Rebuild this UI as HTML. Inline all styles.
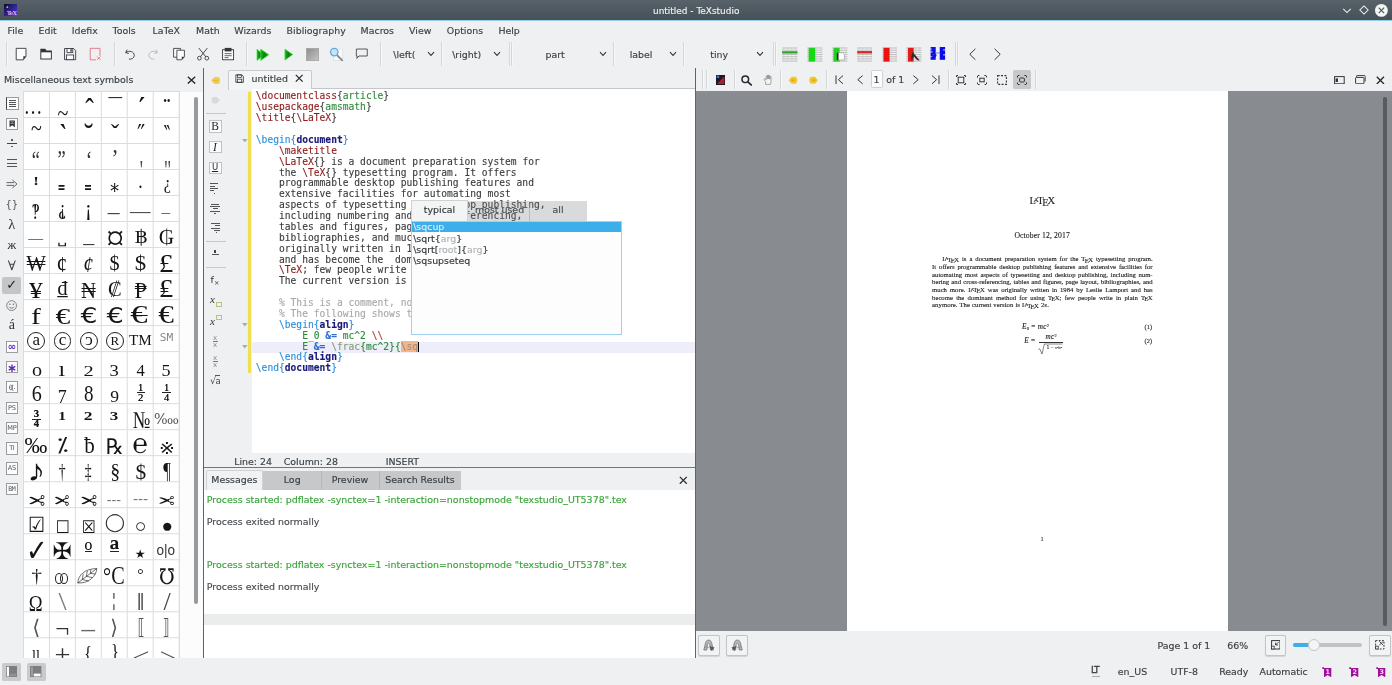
<!DOCTYPE html>
<html lang="en"><head><meta charset="utf-8"><title>untitled - TeXstudio</title>
<style>
html,body{margin:0;padding:0;}
body{width:1392px;height:685px;overflow:hidden;background:#eff0f1;}
#app{will-change:transform;position:relative;width:1392px;height:685px;overflow:hidden;background:#eff0f1;font-family:"DejaVu Sans","Liberation Sans",sans-serif;}
.r{position:absolute;display:block;}
.t{position:absolute;white-space:pre;line-height:12px;-webkit-text-stroke:0.15px currentColor;font-family:"DejaVu Sans","Liberation Sans",sans-serif;}
.m{position:absolute;white-space:pre;-webkit-text-stroke:0.12px currentColor;font-family:"DejaVu Sans Mono","Liberation Mono",monospace;font-size:9.634px;line-height:10.875px;color:#3c3c3c;}
.sy{position:absolute;white-space:pre;text-align:center;font-family:"DejaVu Serif","Liberation Serif",serif;color:#111;line-height:26px;width:26px;height:26px;}
.pd{position:absolute;white-space:pre;-webkit-text-stroke:0.12px currentColor;font-family:"Liberation Serif","DejaVu Serif",serif;color:#222;}
.g{position:absolute;white-space:pre;line-height:30px;height:30px;}

</style></head>
<body>
<div id="app">
<!-- s_chrome -->
<div class="r" style="left:0.00px;top:0.00px;width:1392.00px;height:19.90px;background:linear-gradient(#58626a,#465057);"></div>
<div class="r" style="left:0.00px;top:19.70px;width:1392.00px;height:1.20px;background:linear-gradient(#6db4dc,#bfe3f6);"></div>
<svg class="r" style="left:4.00px;top:4.00px;" width="13.20" height="12.20" viewBox="0 0 13.2 12.2"><defs><linearGradient id="ai" x1="0" y1="0" x2="1" y2="1"><stop offset="0" stop-color="#0a0a14"/><stop offset="0.3" stop-color="#241a6a"/><stop offset="0.7" stop-color="#3b2bb8"/><stop offset="1" stop-color="#5a4ad8"/></linearGradient></defs><rect width="13.2" height="12.2" fill="url(#ai)"/><path d="M2.2 3.6 L3.4 2 L4.4 3.8 Z" fill="#f0f0ff"/><text x="3.0" y="10.6" font-family="DejaVu Serif,serif" font-size="5.4" font-weight="bold" fill="#f0a8d8" letter-spacing="-0.5">TeX</text></svg>
<div class="t" style="left:653.00px;top:5.10px;font-size:8.95px;color:#eff0f1;">untitled - TeXstudio</div>
<svg class="r" style="left:1341.00px;top:4.00px;" width="12.00" height="12.00" viewBox="0 0 16 16"><path d="M3 6.5 L8 11.5 L13 6.5" fill="none" stroke="#eff0f1" stroke-width="1.4"/></svg>
<svg class="r" style="left:1358.00px;top:4.00px;" width="12.00" height="12.00" viewBox="0 0 16 16"><path d="M8 2.5 L13.5 8 L8 13.5 L2.5 8 Z" fill="none" stroke="#eff0f1" stroke-width="1.4"/></svg>
<svg class="r" style="left:1375.20px;top:3.90px;" width="12.80" height="12.80" viewBox="0 0 16 16"><circle cx="8" cy="8" r="8" fill="#f4f5f5"/><path d="M4.6 4.6 L11.4 11.4 M11.4 4.6 L4.6 11.4" stroke="#4a545b" stroke-width="1.4"/></svg>
<div class="t" style="left:7.50px;top:24.74px;font-size:9.425px;color:#3b4045;">File</div>
<div class="t" style="left:38.50px;top:24.74px;font-size:9.425px;color:#3b4045;">Edit</div>
<div class="t" style="left:71.70px;top:24.74px;font-size:9.425px;color:#3b4045;">Idefix</div>
<div class="t" style="left:112.60px;top:24.74px;font-size:9.425px;color:#3b4045;">Tools</div>
<div class="t" style="left:152.60px;top:24.74px;font-size:9.425px;color:#3b4045;">LaTeX</div>
<div class="t" style="left:196.10px;top:24.74px;font-size:9.425px;color:#3b4045;">Math</div>
<div class="t" style="left:234.30px;top:24.74px;font-size:9.425px;color:#3b4045;">Wizards</div>
<div class="t" style="left:286.60px;top:24.74px;font-size:9.425px;color:#3b4045;">Bibliography</div>
<div class="t" style="left:360.60px;top:24.74px;font-size:9.425px;color:#3b4045;">Macros</div>
<div class="t" style="left:409.10px;top:24.74px;font-size:9.425px;color:#3b4045;">View</div>
<div class="t" style="left:446.80px;top:24.74px;font-size:9.425px;color:#3b4045;">Options</div>
<div class="t" style="left:498.40px;top:24.74px;font-size:9.425px;color:#3b4045;">Help</div>
<!-- s_toolbar -->
<div class="r" style="left:5.50px;top:41.50px;width:1.00px;height:24.50px;background:#d4d6d8;"></div><div class="r" style="left:6.50px;top:41.50px;width:1.00px;height:24.50px;background:#f6f7f7;"></div>
<svg class="r" style="left:13.70px;top:47.10px;" width="14.20" height="14.20" viewBox="0 0 16 16"><path d="M2.5 1.5 H13.5 V10.5 L10.5 14.5 H2.5 Z" fill="#fcfcfc" stroke="#31363b" stroke-width="1.0"/><path d="M13.5 10.5 H10.5 V14.5 Z" fill="#31363b"/></svg>
<svg class="r" style="left:38.60px;top:47.10px;" width="14.20" height="14.20" viewBox="0 0 16 16"><path d="M1.5 2 H7 L8.5 4 H14.5 V14 H1.5 Z" fill="#31363b"/><rect x="2.6" y="6" width="10.8" height="7" fill="#fcfcfc"/></svg>
<svg class="r" style="left:62.90px;top:47.10px;" width="14.20" height="14.20" viewBox="0 0 16 16"><path d="M1.7 1.7 H12 L14.3 4 V14.3 H1.7 Z" fill="#e8e9ea" stroke="#31363b" stroke-width="0.95"/><rect x="4.5" y="1.7" width="6.5" height="4.5" fill="#fcfcfc" stroke="#31363b" stroke-width="0.9"/><rect x="8.3" y="2.5" width="1.6" height="2.8" fill="#31363b"/><rect x="4" y="9" width="8" height="5.3" fill="#fcfcfc" stroke="#31363b" stroke-width="0.9"/></svg>
<svg class="r" style="left:87.70px;top:47.10px;" width="14.20" height="14.20" viewBox="0 0 16 16"><path d="M2.5 1.5 H13.5 V10 M9 14.5 H2.5 V1.5" fill="none" stroke="#e0596a" stroke-width="0.85"/><path d="M10.3 10.8 L14 14.5 M14 10.8 L10.3 14.5" stroke="#e0596a" stroke-width="0.85"/></svg>
<div class="r" style="left:113.50px;top:41.50px;width:1.00px;height:24.50px;background:#d4d6d8;"></div><div class="r" style="left:114.50px;top:41.50px;width:1.00px;height:24.50px;background:#f6f7f7;"></div>
<svg class="r" style="left:122.50px;top:47.10px;" width="14.20" height="14.20" viewBox="0 0 16 16"><path d="M3.2 6.2 C7 3.4 13 5.2 12.7 9.6 C12.5 12.6 9.6 14.2 6.6 13.6" fill="none" stroke="#31363b" stroke-width="1.0"/><path d="M4.6 3 L3 6.4 L6.6 7.2" fill="none" stroke="#31363b" stroke-width="1.0"/></svg>
<svg class="r" style="left:146.10px;top:47.10px;" width="14.20" height="14.20" viewBox="0 0 16 16"><path d="M12.8 6.2 C9 3.4 3 5.2 3.3 9.6 C3.5 12.6 6.4 14.2 9.4 13.6" fill="none" stroke="#b4b7b9" stroke-width="1.0"/><path d="M11.4 3 L13 6.4 L9.4 7.2" fill="none" stroke="#b4b7b9" stroke-width="1.0"/></svg>
<svg class="r" style="left:171.70px;top:47.10px;" width="14.20" height="14.20" viewBox="0 0 16 16"><path d="M1.8 1.6 H9.5 V11.5 H1.8 Z" fill="#fcfcfc" stroke="#31363b" stroke-width="0.95"/><path d="M5.5 3.6 H14 V11 L11 14.4 H5.5 Z" fill="#fcfcfc" stroke="#31363b" stroke-width="0.95"/><path d="M14 11 H11 V14.4 Z" fill="#31363b"/></svg>
<svg class="r" style="left:196.40px;top:47.10px;" width="14.20" height="14.20" viewBox="0 0 16 16"><path d="M3.2 1.2 L11 11 M12.8 1.2 L5 11" stroke="#31363b" stroke-width="1.0" fill="none"/><circle cx="3.8" cy="12.6" r="2.1" fill="none" stroke="#31363b" stroke-width="0.95"/><circle cx="12.2" cy="12.6" r="2.1" fill="none" stroke="#31363b" stroke-width="0.95"/></svg>
<svg class="r" style="left:221.40px;top:47.10px;" width="14.20" height="14.20" viewBox="0 0 16 16"><rect x="1.8" y="3" width="12.4" height="11.4" fill="#fcfcfc" stroke="#31363b" stroke-width="1.0"/><rect x="4.2" y="1" width="7.6" height="4" fill="#31363b"/><path d="M4 7.5 H12 M4 9.8 H12 M4 12 H8.5" stroke="#31363b" stroke-width="0.85"/></svg>
<div class="r" style="left:246.20px;top:41.50px;width:1.00px;height:24.50px;background:#d4d6d8;"></div><div class="r" style="left:247.20px;top:41.50px;width:1.00px;height:24.50px;background:#f6f7f7;"></div>
<svg class="r" style="left:256.20px;top:47.50px;" width="13.60" height="13.60" viewBox="0 0 16 16"><defs><linearGradient id="gg" x1="0" y1="0" x2="1" y2="0"><stop offset="0" stop-color="#1fae1f"/><stop offset="0.45" stop-color="#0c7f0c"/><stop offset="1" stop-color="#17a017"/></linearGradient></defs><path d="M1.2 1.4 L8.8 8 L1.2 14.6 Z" fill="url(#gg)" stroke="#35e035" stroke-width="0.9" stroke-linejoin="round"/><path d="M5.6 1.4 L15 8 L5.6 14.6 Z" fill="url(#gg)" stroke="#35e035" stroke-width="0.9" stroke-linejoin="round"/></svg>
<svg class="r" style="left:282.00px;top:47.70px;" width="13.20" height="13.20" viewBox="0 0 16 16"><path d="M3.6 1.4 L13 8 L3.6 14.6 Z" fill="url(#gg)" stroke="#35e035" stroke-width="0.9" stroke-linejoin="round"/></svg>
<svg class="r" style="left:305.90px;top:47.90px;" width="13.20" height="13.20" viewBox="0 0 16 16"><defs><linearGradient id="gs" x1="0" y1="0" x2="1" y2="1"><stop offset="0" stop-color="#8c8c8c"/><stop offset="1" stop-color="#c6c6c6"/></linearGradient></defs><rect x="0.6" y="0.6" width="14.8" height="14.8" fill="url(#gs)" stroke="#9a9a9a" stroke-width="0.8"/></svg>
<svg class="r" style="left:329.10px;top:46.70px;" width="15.00" height="15.00" viewBox="0 0 16 16"><rect x="5" y="2.2" width="9.6" height="12" fill="#fafafa" stroke="#d5d5d5" stroke-width="0.6"/><circle cx="5.6" cy="5.4" r="4" fill="#bfe6fa" stroke="#6aa9d6" stroke-width="1.4"/><path d="M8.6 8.6 L14.6 14.8" stroke="#7f8c8d" stroke-width="2"/></svg>
<svg class="r" style="left:355.20px;top:47.40px;" width="13.60" height="13.60" viewBox="0 0 16 16"><path d="M1.6 2.4 H14.4 V10.6 H4.6 L2.2 13.4 L2.6 10.6 H1.6 Z" fill="none" stroke="#31363b" stroke-width="0.95"/></svg>
<div class="r" style="left:380.30px;top:41.50px;width:1.00px;height:24.50px;background:#d4d6d8;"></div><div class="r" style="left:381.30px;top:41.50px;width:1.00px;height:24.50px;background:#f6f7f7;"></div>
<div class="t" style="left:393.30px;top:49.14px;font-size:9.425px;color:#3b4045;">\left(</div>
<svg class="r" style="left:426.80px;top:51.40px;" width="8.00" height="6.00" viewBox="0 0 8 6"><path d="M1 1.2 L4 4.4 L7 1.2" fill="none" stroke="#31363b" stroke-width="1.05"/></svg>
<div class="r" style="left:441.00px;top:41.50px;width:1.00px;height:24.50px;background:#d4d6d8;"></div><div class="r" style="left:442.00px;top:41.50px;width:1.00px;height:24.50px;background:#f6f7f7;"></div>
<div class="t" style="left:452.20px;top:49.14px;font-size:9.425px;color:#3b4045;">\right)</div>
<svg class="r" style="left:492.50px;top:51.40px;" width="8.00" height="6.00" viewBox="0 0 8 6"><path d="M1 1.2 L4 4.4 L7 1.2" fill="none" stroke="#31363b" stroke-width="1.05"/></svg>
<div class="r" style="left:508.80px;top:41.50px;width:1.00px;height:24.50px;background:#d4d6d8;"></div><div class="r" style="left:509.80px;top:41.50px;width:1.00px;height:24.50px;background:#f6f7f7;"></div>
<div class="r" style="left:510.70px;top:41.50px;width:1.00px;height:24.50px;background:#d4d6d8;"></div><div class="r" style="left:511.70px;top:41.50px;width:1.00px;height:24.50px;background:#f6f7f7;"></div>
<div class="t" style="left:545.50px;top:49.14px;font-size:9.425px;color:#3b4045;">part</div>
<svg class="r" style="left:599.00px;top:51.40px;" width="8.00" height="6.00" viewBox="0 0 8 6"><path d="M1 1.2 L4 4.4 L7 1.2" fill="none" stroke="#31363b" stroke-width="1.05"/></svg>
<div class="r" style="left:613.00px;top:41.50px;width:1.00px;height:24.50px;background:#d4d6d8;"></div><div class="r" style="left:614.00px;top:41.50px;width:1.00px;height:24.50px;background:#f6f7f7;"></div>
<div class="t" style="left:629.70px;top:49.14px;font-size:9.425px;color:#3b4045;">label</div>
<svg class="r" style="left:668.80px;top:51.40px;" width="8.00" height="6.00" viewBox="0 0 8 6"><path d="M1 1.2 L4 4.4 L7 1.2" fill="none" stroke="#31363b" stroke-width="1.05"/></svg>
<div class="r" style="left:682.80px;top:41.50px;width:1.00px;height:24.50px;background:#d4d6d8;"></div><div class="r" style="left:683.80px;top:41.50px;width:1.00px;height:24.50px;background:#f6f7f7;"></div>
<div class="t" style="left:710.30px;top:49.14px;font-size:9.425px;color:#3b4045;">tiny</div>
<svg class="r" style="left:756.30px;top:51.40px;" width="8.00" height="6.00" viewBox="0 0 8 6"><path d="M1 1.2 L4 4.4 L7 1.2" fill="none" stroke="#31363b" stroke-width="1.05"/></svg>
<div class="r" style="left:772.80px;top:41.50px;width:1.00px;height:24.50px;background:#d4d6d8;"></div><div class="r" style="left:773.80px;top:41.50px;width:1.00px;height:24.50px;background:#f6f7f7;"></div>
<div class="r" style="left:774.80px;top:41.50px;width:1.00px;height:24.50px;background:#d4d6d8;"></div><div class="r" style="left:775.80px;top:41.50px;width:1.00px;height:24.50px;background:#f6f7f7;"></div>
<svg class="r" style="left:782.30px;top:46.90px;" width="15.60" height="15.20" viewBox="0 0 15 15"><rect x="0.8" y="1" width="13.4" height="13" fill="#f6f6f6"/><g stroke="#9a9a9a" stroke-width="0.6"><path d="M0 1.00 H15"/><path d="M0 3.15 H15"/><path d="M0 5.30 H15"/><path d="M0 7.45 H15"/><path d="M0 9.60 H15"/><path d="M0 11.75 H15"/><path d="M0 13.90 H15"/></g><g stroke="#c9c9c9" stroke-width="0.6"><path d="M1.5 1 V14"/><path d="M5.5 1 V14"/><path d="M9.5 1 V14"/><path d="M13.5 1 V14"/></g><rect x="0" y="4" width="15" height="2.6" fill="#2fd42f"/><path d="M0 5.3 H15" stroke="#1f9a1f" stroke-width="0.8"/></svg>
<svg class="r" style="left:807.30px;top:46.90px;" width="15.60" height="15.20" viewBox="0 0 15 15"><rect x="0.8" y="1" width="13.4" height="13" fill="#f6f6f6"/><g stroke="#9a9a9a" stroke-width="0.6"><path d="M0 1.00 H15"/><path d="M0 3.15 H15"/><path d="M0 5.30 H15"/><path d="M0 7.45 H15"/><path d="M0 9.60 H15"/><path d="M0 11.75 H15"/><path d="M0 13.90 H15"/></g><g stroke="#c9c9c9" stroke-width="0.6"><path d="M1.5 1 V14"/><path d="M5.5 1 V14"/><path d="M9.5 1 V14"/><path d="M13.5 1 V14"/></g><rect x="1.5" y="0.8" width="6.4" height="13.6" fill="#16d916"/></svg>
<svg class="r" style="left:832.30px;top:46.90px;" width="15.60" height="15.20" viewBox="0 0 15 15"><rect x="0.8" y="1" width="13.4" height="13" fill="#f6f6f6"/><g stroke="#9a9a9a" stroke-width="0.6"><path d="M0 1.00 H15"/><path d="M0 3.15 H15"/><path d="M0 5.30 H15"/><path d="M0 7.45 H15"/><path d="M0 9.60 H15"/><path d="M0 11.75 H15"/><path d="M0 13.90 H15"/></g><g stroke="#c9c9c9" stroke-width="0.6"><path d="M1.5 1 V14"/><path d="M5.5 1 V14"/><path d="M9.5 1 V14"/><path d="M13.5 1 V14"/></g><rect x="1.3" y="0.8" width="6" height="13.6" fill="#22cf22"/><rect x="4.6" y="5.8" width="2" height="7" fill="#1a1a1a"/><path d="M6.2 5.6 H10.4 L12 7.2 V12.8 H6.2 Z" fill="#fdfdfd" stroke="#888" stroke-width="0.5"/></svg>
<svg class="r" style="left:856.60px;top:46.90px;" width="15.60" height="15.20" viewBox="0 0 15 15"><rect x="0.8" y="1" width="13.4" height="13" fill="#f6f6f6"/><g stroke="#9a9a9a" stroke-width="0.6"><path d="M0 1.00 H15"/><path d="M0 3.15 H15"/><path d="M0 5.30 H15"/><path d="M0 7.45 H15"/><path d="M0 9.60 H15"/><path d="M0 11.75 H15"/><path d="M0 13.90 H15"/></g><g stroke="#c9c9c9" stroke-width="0.6"><path d="M1.5 1 V14"/><path d="M5.5 1 V14"/><path d="M9.5 1 V14"/><path d="M13.5 1 V14"/></g><rect x="0" y="4" width="15" height="2.4" fill="#e0262b"/></svg>
<svg class="r" style="left:881.60px;top:46.90px;" width="15.60" height="15.20" viewBox="0 0 15 15"><rect x="0.8" y="1" width="13.4" height="13" fill="#f6f6f6"/><g stroke="#9a9a9a" stroke-width="0.6"><path d="M0 1.00 H15"/><path d="M0 3.15 H15"/><path d="M0 5.30 H15"/><path d="M0 7.45 H15"/><path d="M0 9.60 H15"/><path d="M0 11.75 H15"/><path d="M0 13.90 H15"/></g><g stroke="#c9c9c9" stroke-width="0.6"><path d="M1.5 1 V14"/><path d="M5.5 1 V14"/><path d="M9.5 1 V14"/><path d="M13.5 1 V14"/></g><rect x="1.3" y="0.8" width="6" height="13.6" fill="#ee1111"/></svg>
<svg class="r" style="left:906.00px;top:46.90px;" width="15.60" height="15.20" viewBox="0 0 15 15"><rect x="0.8" y="1" width="13.4" height="13" fill="#f6f6f6"/><g stroke="#9a9a9a" stroke-width="0.6"><path d="M0 1.00 H15"/><path d="M0 3.15 H15"/><path d="M0 5.30 H15"/><path d="M0 7.45 H15"/><path d="M0 9.60 H15"/><path d="M0 11.75 H15"/><path d="M0 13.90 H15"/></g><g stroke="#c9c9c9" stroke-width="0.6"><path d="M1.5 1 V14"/><path d="M5.5 1 V14"/><path d="M9.5 1 V14"/><path d="M13.5 1 V14"/></g><rect x="1.8" y="0.8" width="5.6" height="13.6" fill="#e21a1a"/><path d="M6.2 4.6 L13.4 13.4 L11 13 L7.6 9.4 L5.4 13.6 L5 10.6 Z" fill="#3a2a2a"/></svg>
<svg class="r" style="left:930.40px;top:47.40px;" width="15.40" height="12.80" viewBox="0 0 15 13"><rect x="0.3" y="0" width="5.2" height="13" fill="#1212e6"/><rect x="9.6" y="0" width="5.4" height="13" fill="#0909ee"/><path d="M5 6 H10" stroke="#5a5ad0" stroke-width="0.8"/><path d="M0 2 H2 M0 5 H2.4 M3.4 7.5 H6 M0 10 H2 M13 3 H15 M13 8 H15" stroke="#eff0f1" stroke-width="0.9"/><path d="M1.4 1 C6 3 1 6 5.4 8 C6.4 9.6 2 10.6 0.8 11.6" fill="none" stroke="#1010d8" stroke-width="1.6"/></svg>
<div class="r" style="left:955.10px;top:41.50px;width:1.00px;height:24.50px;background:#d4d6d8;"></div><div class="r" style="left:956.10px;top:41.50px;width:1.00px;height:24.50px;background:#f6f7f7;"></div>
<div class="r" style="left:957.00px;top:41.50px;width:1.00px;height:24.50px;background:#d4d6d8;"></div><div class="r" style="left:958.00px;top:41.50px;width:1.00px;height:24.50px;background:#f6f7f7;"></div>
<svg class="r" style="left:968.00px;top:48.00px;" width="9.00" height="12.60" viewBox="0 0 9 12.6"><path d="M7.4 0.8 L1.8 6.3 L7.4 11.8" fill="none" stroke="#31363b" stroke-width="1"/></svg>
<svg class="r" style="left:993.00px;top:48.00px;" width="9.00" height="12.60" viewBox="0 0 9 12.6"><path d="M1.6 0.8 L7.2 6.3 L1.6 11.8" fill="none" stroke="#31363b" stroke-width="1"/></svg>
<!-- s_left -->
<div class="t" style="left:4.00px;top:73.94px;font-size:9.425px;color:#3b4045;">Miscellaneous text symbols</div>
<svg class="r" style="left:187.00px;top:76.00px;" width="9.00" height="8.40" viewBox="0 0 9 8.4"><path d="M0.8 0.8 L8.2 7.6 M8.2 0.8 L0.8 7.6" stroke="#232629" stroke-width="1.3"/></svg>
<div class="r" style="left:0;top:90px;width:203px;height:568px;overflow:hidden;">
<div class="r" style="left:23.50px;top:1.50px;width:179.50px;height:567.00px;background:#fcfcfc;"></div>
<div class="r" style="left:23.2px;top:1.0999999999999943px;width:156.60px;height:570px;background:#ffffff;background-image:linear-gradient(#d9dbdc,#d9dbdc),linear-gradient(90deg,#d9dbdc 0.9px,transparent 0.9px),linear-gradient(#d9dbdc 0.9px,transparent 0.9px);background-size:0.9px 100%,25.95px 26.03px,25.95px 26.03px;background-position:right top,0 0,0 0;background-repeat:no-repeat,repeat,repeat;"></div>
<div class="r" style="left:0;top:-90px;width:203px;height:700px;"><div class="g" style="left:23.77px;top:93.00px;font-size:18.62px;font-family:Liberation Serif,serif;color:#151515;transform:scale(1.000,1.317);transform-origin:9.31px 20.66px;">…</div><div class="g" style="left:57.43px;top:98.35px;font-size:20.02px;font-family:Liberation Serif,serif;color:#151515;transform:scale(1.000,1.201);transform-origin:5.40px 15.39px;">~</div><div class="g" style="left:85.13px;top:95.30px;font-size:25.95px;font-family:Liberation Serif,serif;color:#151515;transform:scale(1.000,1.260);transform-origin:4.35px 7.41px;">ˆ</div><div class="g" style="left:108.41px;top:83.14px;font-size:13.62px;font-family:Liberation Serif,serif;color:#222;transform:scale(1.000,1.500);transform-origin:6.81px 16.30px;">—</div><div class="g" style="left:135.66px;top:95.35px;font-size:32.70px;font-family:Liberation Serif,serif;font-weight:bold;color:#151515;transform:scale(0.650,1.000);transform-origin:5.89px 5.73px;">´</div><div class="g" style="left:163.32px;top:92.21px;font-size:21.80px;font-family:Liberation Serif,serif;font-weight:bold;color:#151515;transform:scale(1.000,1.125);transform-origin:3.65px 8.70px;">¨</div><div class="g" style="left:30.94px;top:111.60px;font-size:20.02px;font-family:Liberation Serif,serif;color:#151515;transform:scale(1.000,1.297);transform-origin:5.40px 15.39px;">~</div><div class="g" style="left:57.52px;top:121.51px;font-size:32.70px;font-family:Liberation Serif,serif;font-weight:bold;color:#151515;transform:scale(0.650,1.000);transform-origin:4.99px 5.73px;">`</div><div class="g" style="left:83.84px;top:119.87px;font-size:29.19px;font-family:Liberation Serif,serif;color:#151515;transform:scale(1.000,1.120);transform-origin:4.82px 7.12px;">˘</div><div class="g" style="left:110.98px;top:118.69px;font-size:24.39px;font-family:Liberation Serif,serif;color:#151515;">ˇ</div><div class="g" style="left:135.78px;top:121.48px;font-size:30.52px;font-family:Liberation Serif,serif;color:#151515;transform:scale(0.650,1.000);transform-origin:5.11px 6.08px;">˝</div><div class="g" style="left:161.65px;top:120.13px;font-size:26.51px;font-family:DejaVu Serif,serif;color:#151515;transform:scale(0.691,1.000);transform-origin:4.90px 7.60px;">‶</div><div class="g" style="left:30.25px;top:145.31px;font-size:25.64px;font-family:Liberation Serif,serif;color:#333;transform:scale(0.708,1.000);transform-origin:5.77px 9.72px;">“</div><div class="g" style="left:56.11px;top:145.31px;font-size:25.64px;font-family:Liberation Serif,serif;color:#333;transform:scale(0.718,1.000);transform-origin:5.58px 9.72px;">”</div><div class="g" style="left:84.68px;top:144.78px;font-size:24.36px;font-family:Liberation Serif,serif;color:#333;transform:scale(0.805,1.000);transform-origin:4.14px 10.41px;">‘</div><div class="g" style="left:110.86px;top:144.46px;font-size:24.36px;font-family:Liberation Serif,serif;color:#333;transform:scale(0.866,1.000);transform-origin:3.96px 10.41px;">’</div><div class="g" style="left:138.53px;top:154.85px;font-size:27.13px;font-family:Liberation Serif,serif;color:#444;transform:scale(0.650,1.000);transform-origin:2.44px 9.42px;">'</div><div class="g" style="left:161.64px;top:154.85px;font-size:27.13px;font-family:Liberation Serif,serif;color:#444;transform:scale(0.650,1.000);transform-origin:5.49px 9.42px;">"</div><div class="g" style="left:34.47px;top:166.41px;font-size:12.69px;font-family:Liberation Serif,serif;font-weight:bold;color:#151515;transform:scale(1.328,1.000);transform-origin:2.13px 14.94px;">!</div><div class="g" style="left:57.41px;top:173.20px;font-size:9.60px;font-family:DejaVu Sans,sans-serif;font-weight:bold;color:#151515;transform:scale(1.000,1.500);transform-origin:4.03px 15.50px;">=</div><div class="g" style="left:83.89px;top:173.20px;font-size:9.60px;font-family:DejaVu Sans,sans-serif;font-weight:bold;color:#151515;transform:scale(1.000,1.500);transform-origin:4.03px 15.50px;">=</div><div class="g" style="left:108.10px;top:172.81px;font-size:19.76px;font-family:DejaVu Serif,serif;color:#151515;transform:scale(0.880,1.000);transform-origin:6.72px 15.32px;">∗</div><div class="g" style="left:137.36px;top:172.06px;font-size:20.43px;font-family:Liberation Serif,serif;color:#151515;transform:scale(0.867,1.000);transform-origin:3.37px 15.26px;">·</div><div class="g" style="left:162.51px;top:167.97px;font-size:19.38px;font-family:Liberation Serif,serif;color:#151515;transform:scale(0.832,1.000);transform-origin:4.21px 18.93px;">¿</div><div class="g" style="left:30.35px;top:197.48px;font-size:20.43px;font-family:DejaVu Serif,serif;color:#151515;transform:scale(0.753,1.000);transform-origin:5.67px 14.54px;">‽</div><div class="g" style="left:57.35px;top:194.46px;font-size:17.97px;font-family:DejaVu Serif,serif;color:#151515;transform:scale(0.813,1.000);transform-origin:4.99px 18.22px;">⸘</div><div class="g" style="left:85.32px;top:193.41px;font-size:20.25px;font-family:Liberation Serif,serif;color:#151515;transform:scale(1.076,1.000);transform-origin:3.34px 19.27px;">¡</div><div class="g" style="left:107.70px;top:195.79px;font-size:23.58px;font-family:Liberation Serif,serif;color:#444;">–</div><div class="g" style="left:130.06px;top:196.07px;font-size:20.51px;font-family:Liberation Serif,serif;color:#444;">—</div><div class="g" style="left:161.58px;top:196.82px;font-size:17.29px;font-family:Liberation Serif,serif;color:#555;">–</div><div class="g" style="left:28.32px;top:222.87px;font-size:14.75px;font-family:Liberation Serif,serif;color:#444;">—</div><div class="g" style="left:56.77px;top:222.74px;font-size:16.51px;font-family:DejaVu Sans,sans-serif;color:#151515;transform:scale(1.000,0.650);transform-origin:5.24px 21.57px;">␣</div><div class="g" style="left:83.16px;top:220.32px;font-size:22.01px;font-family:Liberation Serif,serif;color:#333;">_</div><div class="g" style="left:105.65px;top:223.03px;font-size:36.68px;font-family:Liberation Serif,serif;color:#151515;transform:scale(0.978,1.000);transform-origin:9.17px 15.39px;">¤</div><div class="g" style="left:134.94px;top:221.12px;font-size:18.86px;font-family:DejaVu Serif,serif;color:#151515;transform:scale(1.083,1.000);transform-origin:6.04px 16.25px;">฿</div><div class="g" style="left:159.11px;top:222.38px;font-size:20.84px;font-family:Liberation Serif,serif;color:#151515;transform:scale(1.026,1.000);transform-origin:7.61px 15.23px;">₲</div><div class="g" style="left:25.40px;top:248.27px;font-size:23.18px;font-family:Liberation Serif,serif;color:#151515;transform:scale(0.896,1.000);transform-origin:10.95px 15.58px;">₩</div><div class="g" style="left:56.09px;top:249.10px;font-size:23.71px;font-family:Liberation Serif,serif;color:#151515;transform:scale(0.907,1.000);transform-origin:5.93px 15.23px;">¢</div><div class="g" style="left:81.59px;top:249.10px;font-size:23.71px;font-family:Liberation Serif,serif;font-style:italic;color:#151515;transform:scale(0.851,1.000);transform-origin:6.58px 15.23px;">¢</div><div class="g" style="left:109.45px;top:247.95px;font-size:22.00px;font-family:Liberation Serif,serif;color:#151515;transform:scale(0.916,1.000);transform-origin:5.61px 15.40px;">$</div><div class="g" style="left:135.04px;top:247.95px;font-size:22.00px;font-family:Liberation Serif,serif;color:#151515;transform:scale(1.037,1.000);transform-origin:5.61px 15.40px;">$</div><div class="g" style="left:160.32px;top:248.60px;font-size:24.77px;font-family:Liberation Serif,serif;color:#151515;transform:scale(1.175,1.000);transform-origin:6.56px 15.33px;">£</div><div class="g" style="left:30.01px;top:274.77px;font-size:23.71px;font-family:Liberation Serif,serif;color:#151515;transform:scale(1.172,1.000);transform-origin:5.93px 15.23px;">¥</div><div class="g" style="left:56.69px;top:273.01px;font-size:21.20px;font-family:Liberation Serif,serif;color:#151515;transform:scale(0.964,1.000);transform-origin:5.41px 16.01px;">₫</div><div class="g" style="left:79.70px;top:274.77px;font-size:23.71px;font-family:Liberation Serif,serif;color:#151515;transform:scale(0.876,1.000);transform-origin:8.71px 15.23px;">₦</div><div class="g" style="left:107.94px;top:274.44px;font-size:20.49px;font-family:Liberation Serif,serif;color:#151515;">₡</div><div class="g" style="left:133.68px;top:274.77px;font-size:23.71px;font-family:Liberation Serif,serif;color:#151515;transform:scale(0.937,1.000);transform-origin:6.64px 15.23px;">₱</div><div class="g" style="left:160.39px;top:274.27px;font-size:24.52px;font-family:Liberation Serif,serif;color:#151515;transform:scale(1.187,1.000);transform-origin:6.50px 15.41px;">₤</div><div class="g" style="left:32.44px;top:301.12px;font-size:23.65px;font-family:Liberation Serif,serif;color:#151515;transform:scale(1.246,1.000);transform-origin:4.32px 14.66px;">f</div><div class="g" style="left:57.00px;top:300.88px;font-size:23.67px;font-family:Liberation Serif,serif;color:#151515;transform:scale(1.249,1.000);transform-origin:5.92px 15.31px;">€</div><div class="g" style="left:82.24px;top:301.29px;font-size:21.65px;font-family:DejaVu Sans,sans-serif;color:#151515;transform:scale(1.232,1.000);transform-origin:6.17px 14.65px;">€</div><div class="g" style="left:108.24px;top:301.29px;font-size:21.65px;font-family:DejaVu Sans,sans-serif;color:#151515;transform:scale(1.258,1.000);transform-origin:6.17px 14.65px;">€</div><div class="g" style="left:133.40px;top:300.37px;font-size:24.40px;font-family:Liberation Serif,serif;color:#151515;transform:scale(1.397,1.000);transform-origin:6.10px 15.57px;text-decoration:line-through;text-decoration-thickness:1.2px;">€</div><div class="g" style="left:160.21px;top:300.37px;font-size:24.40px;font-family:Liberation Serif,serif;color:#151515;transform:scale(1.283,1.000);transform-origin:6.10px 15.57px;">€</div><div class="r" style="left:136.63px;top:383.90px;width:8.04px;text-align:center;font-family:Liberation Serif,serif;font-size:10.6px;line-height:8.8px;color:#151515;"><div style="border-bottom:0.8px solid #222;height:8.6px;">1</div><div style="height:8.8px;padding-top:0.5px;">2</div></div><div class="r" style="left:162.29px;top:383.90px;width:8.53px;text-align:center;font-family:Liberation Serif,serif;font-size:10.6px;line-height:8.8px;color:#151515;"><div style="border-bottom:0.8px solid #222;height:8.6px;">1</div><div style="height:8.8px;padding-top:0.5px;">4</div></div><div class="r" style="left:32.00px;top:409.92px;width:8.69px;text-align:center;font-family:Liberation Serif,serif;font-size:10.6px;line-height:8.8px;color:#151515;font-weight:bold;"><div style="border-bottom:0.8px solid #222;height:8.6px;">3</div><div style="height:8.8px;padding-top:0.5px;">4</div></div><div class="g" style="left:130.37px;top:325.54px;font-size:13.73px;font-family:Liberation Serif,serif;color:#151515;transform:scale(1.105,1.000);transform-origin:10.19px 15.00px;">TM</div><div class="g" style="left:160.09px;top:322.78px;font-size:10.83px;font-family:DejaVu Sans Mono,monospace;color:#888;transform:scale(1.034,1.000);transform-origin:6.63px 14.58px;">SM</div><div class="g" style="left:31.65px;top:353.91px;font-size:19.75px;font-family:Liberation Serif,serif;color:#151515;transform:scale(1.020,1.000);transform-origin:4.94px 17.46px;">o</div><div class="g" style="left:59.21px;top:354.10px;font-size:20.61px;font-family:Liberation Serif,serif;color:#151515;transform:scale(1.157,1.000);transform-origin:2.89px 17.26px;">ı</div><div class="g" style="left:85.14px;top:356.10px;font-size:14.37px;font-family:Liberation Serif,serif;color:#151515;transform:scale(1.422,1.000);transform-origin:3.52px 15.26px;">2</div><div class="g" style="left:110.44px;top:355.77px;font-size:16.35px;font-family:Liberation Serif,serif;color:#151515;transform:scale(1.133,1.000);transform-origin:4.13px 15.19px;">3</div><div class="g" style="left:136.54px;top:355.93px;font-size:16.60px;font-family:Liberation Serif,serif;color:#151515;">4</div><div class="g" style="left:162.48px;top:355.77px;font-size:16.47px;font-family:Liberation Serif,serif;color:#151515;transform:scale(1.103,1.000);transform-origin:4.24px 15.19px;">5</div><div class="g" style="left:30.74px;top:379.04px;font-size:22.94px;font-family:Liberation Serif,serif;color:#151515;transform:scale(0.879,1.000);transform-origin:5.85px 15.05px;">6</div><div class="g" style="left:57.70px;top:381.59px;font-size:17.97px;font-family:Liberation Serif,serif;color:#151515;">7</div><div class="g" style="left:82.97px;top:379.04px;font-size:22.77px;font-family:Liberation Serif,serif;color:#151515;transform:scale(0.835,1.000);transform-origin:5.69px 15.04px;">8</div><div class="g" style="left:110.27px;top:381.41px;font-size:17.57px;font-family:Liberation Serif,serif;color:#151515;">9</div><div class="g" style="left:58.81px;top:401.43px;font-size:12.38px;font-family:Liberation Serif,serif;font-weight:bold;color:#151515;transform:scale(1.249,1.000);transform-origin:3.28px 14.91px;">1</div><div class="g" style="left:85.16px;top:401.43px;font-size:12.38px;font-family:Liberation Serif,serif;font-weight:bold;color:#151515;transform:scale(1.414,1.000);transform-origin:3.10px 14.91px;">2</div><div class="g" style="left:111.36px;top:401.31px;font-size:12.20px;font-family:Liberation Serif,serif;font-weight:bold;color:#151515;transform:scale(1.402,1.000);transform-origin:3.05px 15.04px;">3</div><div class="g" style="left:129.54px;top:404.62px;font-size:24.21px;font-family:Liberation Serif,serif;color:#151515;transform:scale(0.763,1.000);transform-origin:11.44px 15.57px;">№</div><div class="g" style="left:154.08px;top:404.05px;font-size:14.39px;font-family:DejaVu Serif,serif;color:#555;transform:scale(1.000,1.047);transform-origin:12.48px 14.75px;">‱</div><div class="g" style="left:24.52px;top:431.11px;font-size:22.84px;font-family:Liberation Serif,serif;color:#151515;">‰</div><div class="g" style="left:57.62px;top:430.35px;font-size:19.94px;font-family:DejaVu Serif,serif;color:#151515;transform:scale(1.312,1.000);transform-origin:4.88px 15.42px;">⁒</div><div class="g" style="left:83.59px;top:431.23px;font-size:22.03px;font-family:Liberation Serif,serif;color:#151515;transform:scale(0.947,1.000);transform-origin:5.07px 14.96px;">ƀ</div><div class="g" style="left:105.10px;top:431.77px;font-size:21.72px;font-family:DejaVu Sans,sans-serif;color:#151515;transform:scale(0.922,1.000);transform-origin:9.72px 14.57px;">℞</div><div class="g" style="left:132.02px;top:429.36px;font-size:27.94px;font-family:Liberation Serif,serif;color:#151515;transform:scale(0.934,1.000);transform-origin:8.38px 17.24px;">℮</div><div class="g" style="left:159.85px;top:434.27px;font-size:16.46px;font-family:DejaVu Sans,sans-serif;color:#151515;transform:scale(1.155,1.000);transform-origin:6.87px 14.53px;">※</div><div class="g" style="left:28.77px;top:455.89px;font-size:30.32px;font-family:Liberation Serif,serif;color:#151515;transform:scale(1.218,1.000);transform-origin:7.58px 16.21px;">♪</div><div class="g" style="left:57.26px;top:456.02px;font-size:20.99px;font-family:Liberation Serif,serif;color:#151515;transform:scale(0.650,1.000);transform-origin:5.25px 15.91px;">†</div><div class="g" style="left:83.25px;top:456.02px;font-size:20.99px;font-family:Liberation Serif,serif;color:#151515;transform:scale(0.650,1.000);transform-origin:5.25px 15.91px;">‡</div><div class="g" style="left:109.65px;top:455.79px;font-size:21.12px;font-family:Liberation Serif,serif;color:#151515;transform:scale(0.942,1.000);transform-origin:5.33px 16.14px;">§</div><div class="g" style="left:135.52px;top:456.83px;font-size:21.39px;font-family:Liberation Serif,serif;color:#151515;">$</div><div class="g" style="left:161.68px;top:455.62px;font-size:22.43px;font-family:Liberation Serif,serif;color:#151515;transform:scale(0.746,1.000);transform-origin:5.05px 16.56px;">¶</div><div class="g" style="left:26.85px;top:485.75px;font-size:23.61px;font-family:DejaVu Sans,sans-serif;color:#151515;transform:scale(-0.864,1.000);transform-origin:9.74px 14.38px;">✂</div><div class="g" style="left:52.36px;top:485.75px;font-size:23.61px;font-family:DejaVu Sans,sans-serif;color:#151515;transform:scale(-0.790,1.000);transform-origin:9.74px 14.38px;">✂</div><div class="g" style="left:78.68px;top:485.75px;font-size:23.61px;font-family:DejaVu Sans,sans-serif;color:#151515;transform:scale(-0.864,1.000);transform-origin:9.74px 14.38px;">✂</div><div class="g" style="left:106.80px;top:485.84px;font-size:13.28px;font-family:DejaVu Sans,sans-serif;color:#777;">---</div><div class="g" style="left:132.91px;top:483.93px;font-size:14.11px;font-family:DejaVu Sans,sans-serif;color:#777;">---</div><div class="g" style="left:157.77px;top:485.85px;font-size:20.71px;font-family:DejaVu Sans,sans-serif;color:#151515;transform:scale(-0.954,1.000);transform-origin:8.54px 14.44px;">✂</div><div class="g" style="left:26.77px;top:510.11px;font-size:21.27px;font-family:DejaVu Sans,sans-serif;color:#151515;transform:scale(0.896,1.000);transform-origin:9.57px 14.73px;">☑</div><div class="g" style="left:54.74px;top:511.61px;font-size:17.24px;font-family:DejaVu Sans,sans-serif;color:#151515;transform:scale(0.922,1.000);transform-origin:7.76px 14.71px;">☐</div><div class="g" style="left:80.90px;top:511.61px;font-size:17.24px;font-family:DejaVu Sans,sans-serif;color:#151515;transform:scale(0.922,1.000);transform-origin:7.76px 14.71px;">☒</div><div class="g" style="left:104.68px;top:506.58px;font-size:18.11px;font-family:DejaVu Sans,sans-serif;color:#333;">◯</div><div class="g" style="left:135.11px;top:510.96px;font-size:18.58px;font-family:Liberation Serif,serif;color:#151515;transform:scale(1.048,1.000);transform-origin:5.62px 15.93px;">○</div><div class="g" style="left:161.38px;top:510.71px;font-size:19.01px;font-family:Liberation Serif,serif;color:#151515;">●</div><div class="g" style="left:23.98px;top:536.17px;font-size:30.56px;font-family:DejaVu Sans,sans-serif;color:#151515;transform:scale(0.844,1.000);transform-origin:12.53px 14.42px;">✓</div><div class="g" style="left:52.41px;top:535.77px;font-size:23.07px;font-family:DejaVu Sans,sans-serif;color:#151515;">✠</div><div class="g" style="left:83.63px;top:536.05px;font-size:28.75px;font-family:Liberation Serif,serif;color:#151515;transform:scale(0.873,1.000);transform-origin:4.46px 10.05px;">º</div><div class="r" style="left:84.57px;top:551.41px;width:7.03px;height:0.9px;background:#222"></div><div class="g" style="left:109.76px;top:536.75px;font-size:31.55px;font-family:Liberation Serif,serif;font-weight:bold;color:#151515;">ª</div><div class="r" style="left:110.24px;top:551.41px;width:8.66px;height:0.9px;background:#222"></div><div class="g" style="left:135.16px;top:539.22px;font-size:11.73px;font-family:DejaVu Sans,sans-serif;color:#151515;transform:scale(1.039,1.000);transform-origin:5.25px 14.81px;">★</div><div class="g" style="left:156.45px;top:536.22px;font-size:13.56px;font-family:Liberation Sans,sans-serif;color:#333;transform:scale(1.000,1.032);transform-origin:9.29px 16.01px;">o|o</div><div class="g" style="left:31.55px;top:561.22px;font-size:19.17px;font-family:Liberation Serif,serif;color:#151515;transform:scale(1.085,1.000);transform-origin:4.79px 15.94px;">†</div><div class="r" style="left:55.15px;top:573.48px;width:8.10px;height:10.63px;box-sizing:border-box;border:1px solid #222;border-radius:50%;"></div><div class="r" style="left:60.15px;top:573.48px;width:8.10px;height:10.63px;box-sizing:border-box;border:1px solid #222;border-radius:50%;"></div><div class="g" style="left:101.16px;top:561.18px;font-size:24.22px;font-family:Liberation Serif,serif;color:#151515;transform:scale(0.835,1.000);transform-origin:12.84px 15.57px;">°C</div><div class="g" style="left:137.31px;top:559.58px;font-size:16.08px;font-family:Liberation Serif,serif;color:#151515;">°</div><div class="g" style="left:157.73px;top:562.10px;font-size:21.29px;font-family:DejaVu Serif,serif;color:#151515;transform:scale(0.898,1.000);transform-origin:8.83px 14.89px;">℧</div><div class="g" style="left:27.49px;top:587.59px;font-size:23.28px;font-family:Liberation Serif,serif;color:#151515;transform:scale(0.801,1.000);transform-origin:8.61px 15.32px;">Ω</div><div class="g" style="left:58.85px;top:586.83px;font-size:26.11px;font-family:Liberation Serif,serif;color:#777;transform:scale(1.118,1.000);transform-origin:3.66px 15.01px;">\</div><div class="g" style="left:112.24px;top:584.96px;font-size:19.22px;font-family:Liberation Serif,serif;color:#666;transform:scale(1.500,1.000);transform-origin:1.92px 16.89px;">¦</div><div class="g" style="left:137.21px;top:587.09px;font-size:25.17px;font-family:Liberation Serif,serif;color:#444;transform:scale(1.169,1.000);transform-origin:3.52px 14.75px;">‖</div><div class="g" style="left:163.48px;top:586.83px;font-size:26.11px;font-family:Liberation Serif,serif;color:#444;">/</div><div class="g" style="left:32.32px;top:612.23px;font-size:20.48px;font-family:DejaVu Serif,serif;color:#555;">⟨</div><div class="g" style="left:55.26px;top:613.94px;font-size:25.64px;font-family:Liberation Serif,serif;color:#333;transform:scale(0.978,1.000);transform-origin:7.24px 17.73px;">¬</div><div class="g" style="left:81.60px;top:613.16px;font-size:26.92px;font-family:Liberation Serif,serif;color:#666;">–</div><div class="g" style="left:110.27px;top:612.23px;font-size:20.48px;font-family:DejaVu Serif,serif;color:#555;transform:scale(0.962,1.000);transform-origin:3.89px 15.60px;">⟩</div><div class="g" style="left:135.85px;top:611.63px;font-size:21.23px;font-family:DejaVu Sans,sans-serif;color:#555;transform:scale(0.698,1.000);transform-origin:5.15px 15.87px;">⟦</div><div class="g" style="left:161.27px;top:611.63px;font-size:21.23px;font-family:DejaVu Sans,sans-serif;color:#555;transform:scale(0.673,1.000);transform-origin:5.15px 15.87px;">⟧</div><div class="g" style="left:31.18px;top:638.17px;font-size:18.12px;font-family:Liberation Serif,serif;color:#151515;transform:scale(0.796,1.000);transform-origin:5.07px 16.83px;">ıı</div><div class="g" style="left:54.49px;top:639.86px;font-size:28.37px;font-family:Liberation Serif,serif;color:#333;">+</div><div class="g" style="left:83.27px;top:637.65px;font-size:21.08px;font-family:Liberation Serif,serif;color:#151515;transform:scale(0.790,1.000);transform-origin:5.06px 16.10px;">{</div><div class="g" style="left:109.94px;top:636.32px;font-size:21.08px;font-family:Liberation Serif,serif;color:#151515;transform:scale(0.790,1.000);transform-origin:5.06px 16.10px;">}</div><div class="g" style="left:133.48px;top:642.64px;font-size:27.49px;font-family:Liberation Serif,serif;color:#555;transform:scale(1.108,1.000);transform-origin:7.77px 14.86px;">&lt;</div><div class="g" style="left:159.73px;top:642.64px;font-size:27.49px;font-family:Liberation Serif,serif;color:#555;transform:scale(1.043,1.000);transform-origin:7.77px 14.86px;">&gt;</div><div class="r" style="left:136.63px;top:383.90px;width:8.04px;text-align:center;font-family:Liberation Serif,serif;font-size:10.6px;line-height:8.8px;color:#151515;"><div style="border-bottom:0.8px solid #222;height:8.6px;">1</div><div style="height:8.8px;padding-top:0.5px;">2</div></div><div class="r" style="left:162.29px;top:383.90px;width:8.53px;text-align:center;font-family:Liberation Serif,serif;font-size:10.6px;line-height:8.8px;color:#151515;"><div style="border-bottom:0.8px solid #222;height:8.6px;">1</div><div style="height:8.8px;padding-top:0.5px;">4</div></div><div class="r" style="left:32.00px;top:409.92px;width:8.69px;text-align:center;font-family:Liberation Serif,serif;font-size:10.6px;line-height:8.8px;color:#151515;font-weight:bold;"><div style="border-bottom:0.8px solid #222;height:8.6px;">3</div><div style="height:8.8px;padding-top:0.5px;">4</div></div><div class="r" style="left:27.36px;top:331.80px;width:17.98px;height:17.98px;box-sizing:border-box;border:0.85px solid #222;border-radius:50%;text-align:center;line-height:13.08px;font-family:Liberation Serif,serif;font-size:17px;color:#151515;">a</div><div class="r" style="left:53.51px;top:331.80px;width:17.98px;height:17.98px;box-sizing:border-box;border:0.85px solid #222;border-radius:50%;text-align:center;line-height:13.08px;font-family:Liberation Serif,serif;font-size:17px;color:#151515;">c</div><div class="r" style="left:79.67px;top:331.80px;width:17.98px;height:17.98px;box-sizing:border-box;border:0.85px solid #222;border-radius:50%;text-align:center;line-height:13.08px;font-family:Liberation Serif,serif;font-size:17px;color:#151515;transform:scaleX(-1);">c</div><div class="r" style="left:105.83px;top:331.80px;width:17.98px;height:17.98px;box-sizing:border-box;border:0.85px solid #222;border-radius:50%;text-align:center;line-height:16.48px;font-family:Liberation Serif,serif;font-size:13px;color:#151515;">R</div></div>
<svg class="r" style="left:75.40px;top:477.20px;" width="24.60" height="18.00" viewBox="0 0 22 18"><path d="M1.5 16 C2 8 8 2 20.5 1.5 C20 9 13 16.5 1.5 16 Z M1.5 16 L20.5 1.5 M6 12.5 L7 6.8 M6 12.5 L12.5 14 M10 9.4 L11 4 M10 9.4 L16.4 10.6 M14 6.4 L14.6 2.6 M14 6.4 L19 7" fill="none" stroke="#333" stroke-width="0.7"/></svg>
<div class="r" style="left:193.60px;top:6.50px;width:4.20px;height:507.50px;background:#989b9d;border-radius:2.2px;"></div>
</div>
<div class="r" style="left:6.10px;top:97.20px;width:10.60px;height:10.80px;background:#fcfcfc;border:0.6px solid #9a9c9e;border-left:1.6px solid #444;"></div>
<div class="r" style="left:9.30px;top:99.60px;width:6.60px;height:0.80px;background:#555;"></div>
<div class="r" style="left:9.30px;top:101.65px;width:6.60px;height:0.80px;background:#555;"></div>
<div class="r" style="left:9.30px;top:103.70px;width:6.60px;height:0.80px;background:#555;"></div>
<div class="r" style="left:9.30px;top:105.75px;width:6.60px;height:0.80px;background:#555;"></div>
<div class="r" style="left:6.10px;top:117.60px;width:10.40px;height:10.20px;background:#fcfcfc;border:0.6px solid #9a9c9e;"></div><svg class="r" style="left:8.60px;top:120.00px;" width="6.40" height="7.60" viewBox="0 0 8 10"><path d="M0.5 0.5 H7.5 V9.5 L4 7 L0.5 9.5 Z" fill="#333"/><path d="M2 2.5 H6 M2 4.5 H6" stroke="#ddd" stroke-width="0.8"/></svg>
<div class="r" style="left:6.70px;top:142.60px;width:10.40px;height:1.10px;background:#444;"></div>
<div class="r" style="left:11.10px;top:139.20px;width:1.70px;height:1.70px;background:#444;border-radius:50%;"></div>
<div class="r" style="left:11.10px;top:145.60px;width:1.70px;height:1.70px;background:#444;border-radius:50%;"></div>
<div class="r" style="left:6.80px;top:159.40px;width:10.60px;height:1.00px;background:#555;"></div>
<div class="r" style="left:6.80px;top:162.60px;width:10.60px;height:1.00px;background:#555;"></div>
<div class="r" style="left:6.80px;top:165.80px;width:10.60px;height:1.00px;background:#555;"></div>
<svg class="r" style="left:6.30px;top:179.30px;" width="11.60" height="10.00" viewBox="0 0 11.6 10"><path d="M0.5 3.6 H8 M0.5 6.4 H8 M6.4 1 L11 5 L6.4 9" fill="none" stroke="#555" stroke-width="0.9"/></svg>
<div class="r" style="left:-0.20px;top:194.80px;width:24px;height:20px;line-height:20px;text-align:center;font-size:10px;font-family:DejaVu Sans,sans-serif;color:#555;white-space:pre;">{}</div>
<div class="r" style="left:-0.20px;top:214.20px;width:24px;height:20px;line-height:20px;text-align:center;font-size:14.5px;font-family:Liberation Serif,serif;color:#333;white-space:pre;">λ</div>
<div class="r" style="left:-0.20px;top:235.00px;width:24px;height:20px;line-height:20px;text-align:center;font-size:12.5px;font-family:Liberation Serif,serif;color:#333;white-space:pre;">ж</div>
<div class="r" style="left:-0.20px;top:255.00px;width:24px;height:20px;line-height:20px;text-align:center;font-size:13.5px;font-family:DejaVu Serif,serif;color:#444;white-space:pre;">∀</div>
<div class="r" style="left:2.40px;top:276.70px;width:18.40px;height:17.80px;background:#c3c5c7;border-radius:2px;"></div>
<div class="r" style="left:-0.20px;top:275.20px;width:24px;height:20px;line-height:20px;text-align:center;font-size:13px;font-family:DejaVu Sans,sans-serif;color:#1a1a1a;white-space:pre;">✓</div>
<svg class="r" style="left:6.20px;top:300.10px;" width="11.20" height="11.20" viewBox="0 0 16 16"><circle cx="8" cy="8" r="7" fill="none" stroke="#555" stroke-width="1"/><circle cx="5.6" cy="6" r="0.9" fill="#444"/><circle cx="10.4" cy="6" r="0.9" fill="#444"/><path d="M4.4 9.6 C6 12.4 10 12.4 11.6 9.6" fill="none" stroke="#444" stroke-width="1"/></svg>
<div class="r" style="left:-0.20px;top:315.00px;width:24px;height:20px;line-height:20px;text-align:center;font-size:14px;font-family:Liberation Serif,serif;color:#333;white-space:pre;">á</div>
<div class="r" style="left:6.10px;top:340.60px;width:10.40px;height:10.20px;background:#fcfcfc;border:0.6px solid #9a9c9e;"></div><div class="r" style="left:-0.20px;top:336.00px;width:24px;height:20px;line-height:20px;text-align:center;font-size:10.5px;font-family:DejaVu Sans,sans-serif;color:#5a2ec0;white-space:pre;font-weight:bold;">∞</div>
<div class="r" style="left:6.10px;top:361.20px;width:10.40px;height:10.20px;background:#fcfcfc;border:0.6px solid #9a9c9e;"></div><div class="r" style="left:-0.20px;top:357.60px;width:24px;height:20px;line-height:20px;text-align:center;font-size:12px;font-family:DejaVu Sans,sans-serif;color:#5a2ec0;white-space:pre;font-weight:bold;">∗</div>
<div class="r" style="left:6.10px;top:381.20px;width:10.40px;height:10.20px;background:#fcfcfc;border:0.6px solid #9a9c9e;"></div><div class="r" style="left:-0.20px;top:376.60px;width:24px;height:20px;line-height:20px;text-align:center;font-size:6.5px;font-family:Liberation Serif,serif;color:#333;white-space:pre;letter-spacing:-0.6px;">(([.</div>
<div class="r" style="left:6.10px;top:401.80px;width:10.40px;height:10.20px;background:#fcfcfc;border:0.6px solid #9a9c9e;"></div><div class="r" style="left:-0.20px;top:397.60px;width:24px;height:20px;line-height:20px;text-align:center;font-size:6.6px;font-family:DejaVu Sans,sans-serif;color:#555;white-space:pre;letter-spacing:-0.3px;">PS</div>
<div class="r" style="left:6.10px;top:421.90px;width:10.40px;height:10.20px;background:#fcfcfc;border:0.6px solid #9a9c9e;"></div><div class="r" style="left:-0.20px;top:417.70px;width:24px;height:20px;line-height:20px;text-align:center;font-size:6.6px;font-family:DejaVu Sans,sans-serif;color:#555;white-space:pre;letter-spacing:-0.3px;">MP</div>
<div class="r" style="left:6.10px;top:442.40px;width:10.40px;height:10.20px;background:#fcfcfc;border:0.6px solid #9a9c9e;"></div><div class="r" style="left:-0.20px;top:438.20px;width:24px;height:20px;line-height:20px;text-align:center;font-size:6.6px;font-family:DejaVu Sans,sans-serif;color:#555;white-space:pre;letter-spacing:-0.3px;">TI</div>
<div class="r" style="left:6.10px;top:462.40px;width:10.40px;height:10.20px;background:#fcfcfc;border:0.6px solid #9a9c9e;"></div><div class="r" style="left:-0.20px;top:458.20px;width:24px;height:20px;line-height:20px;text-align:center;font-size:6.6px;font-family:DejaVu Sans,sans-serif;color:#555;white-space:pre;letter-spacing:-0.3px;">AS</div>
<div class="r" style="left:6.10px;top:482.90px;width:10.40px;height:10.20px;background:#fcfcfc;border:0.6px solid #9a9c9e;"></div><div class="r" style="left:-0.20px;top:478.70px;width:24px;height:20px;line-height:20px;text-align:center;font-size:6.6px;font-family:DejaVu Sans Mono,monospace;color:#555;white-space:pre;letter-spacing:-0.3px;">BM</div>
<!-- s_editor -->
<div class="r" style="left:202.95px;top:67.90px;width:1.10px;height:590.00px;background:#606468;"></div>
<svg class="r" style="left:210.00px;top:75.60px;" width="10.40" height="9.00" viewBox="0 0 10.4 9"><path d="M1 4.5 L4.6 1 L8.6 1 L10 3 L10 6 L8.6 8 L4.6 8 Z" fill="#f5cc48"/><path d="M3.4 4.5 H7.6" stroke="#e6b52a" stroke-width="1.4"/></svg>
<div class="r" style="left:227.50px;top:69.80px;width:82.40px;height:19.50px;background:#f4f5f5;border:0.8px solid #c9cbcd;border-bottom:none;border-radius:2px 2px 0 0;"></div>
<div class="r" style="left:311.00px;top:88.00px;width:384.00px;height:0.90px;background:#c4c6c8;"></div>
<svg class="r" style="left:234.60px;top:74.20px;" width="9.20" height="9.20" viewBox="0 0 16 16"><path d="M1.5 1.5 H12 L14.5 4 V14.5 H1.5 Z" fill="#f4f5f5" stroke="#31363b" stroke-width="1.5"/><rect x="4.5" y="1.5" width="6.5" height="4.6" fill="none" stroke="#31363b" stroke-width="1.3"/><rect x="4.3" y="9" width="7.4" height="5.5" fill="none" stroke="#31363b" stroke-width="1.3"/></svg>
<div class="t" style="left:251.60px;top:73.14px;font-size:9.425px;color:#3b4045;">untitled</div>
<svg class="r" style="left:295.20px;top:74.40px;" width="8.40" height="8.40" viewBox="0 0 8.4 8.4"><path d="M0.8 0.8 L7.6 7.6 M7.6 0.8 L0.8 7.6" stroke="#232629" stroke-width="1.2"/></svg>
<div class="r" style="left:251.50px;top:89.30px;width:443.50px;height:363.90px;background:#ffffff;"></div>
<div class="r" style="left:248.30px;top:91.60px;width:3.00px;height:281.40px;background:#f0e050;box-shadow:0 0 1px #f4ec90;"></div>
<div class="r" style="left:251.50px;top:341.82px;width:443.50px;height:11.28px;background:#eeeefa;"></div>
<div class="m" style="left:255.8px;top:91.43px;"><span style="color:#8e1b1b;">\documentclass</span><span style="color:#444;">{</span><span style="color:#2e8b3a;">article</span><span style="color:#444;">}</span></div>
<div class="m" style="left:255.8px;top:102.31px;"><span style="color:#8e1b1b;">\usepackage</span><span style="color:#444;">{</span><span style="color:#2e8b3a;">amsmath</span><span style="color:#444;">}</span></div>
<div class="m" style="left:255.8px;top:113.18px;"><span style="color:#8e1b1b;">\title</span><span style="color:#444;">{</span><span style="color:#8e1b1b;">\LaTeX</span><span style="color:#444;">}</span></div>
<div class="m" style="left:255.8px;top:134.93px;"><span style="color:#2a8fdd;">\begin{</span><span style="color:#1a1a7a;font-weight:bold;">document</span><span style="color:#2a8fdd;">}</span></div>
<div class="m" style="left:255.8px;top:145.80px;">    <span style="color:#8e1b1b;">\maketitle</span></div>
<div class="m" style="left:255.8px;top:156.68px;">    <span style="color:#8e1b1b;">\LaTeX</span><span style="color:#3c3c3c;">{} is a document preparation system for</span></div>
<div class="m" style="left:255.8px;top:167.55px;">    <span style="color:#3c3c3c;">the </span><span style="color:#8e1b1b;">\TeX</span><span style="color:#3c3c3c;">{} typesetting program. It offers</span></div>
<div class="m" style="left:255.8px;top:178.43px;">    <span style="color:#3c3c3c;">programmable desktop publishing features and</span></div>
<div class="m" style="left:255.8px;top:189.30px;">    <span style="color:#3c3c3c;">extensive facilities for automating most</span></div>
<div class="m" style="left:255.8px;top:200.18px;">    <span style="color:#3c3c3c;">aspects of typesetting and desktop publishing,</span></div>
<div class="m" style="left:255.8px;top:211.05px;">    <span style="color:#3c3c3c;">including numbering and cross-referencing,</span></div>
<div class="m" style="left:255.8px;top:221.93px;">    <span style="color:#3c3c3c;">tables and figures, page layout,</span></div>
<div class="m" style="left:255.8px;top:232.80px;">    <span style="color:#3c3c3c;">bibliographies, and much more. </span><span style="color:#8e1b1b;">\LaTeX</span><span style="color:#3c3c3c;">{} was</span></div>
<div class="m" style="left:255.8px;top:243.68px;">    <span style="color:#3c3c3c;">originally written in 1984 by Leslie Lamport</span></div>
<div class="m" style="left:255.8px;top:254.55px;">    <span style="color:#3c3c3c;">and has become the  dominant method for using</span></div>
<div class="m" style="left:255.8px;top:265.43px;">    <span style="color:#8e1b1b;">\TeX</span><span style="color:#3c3c3c;">; few people write in plain </span><span style="color:#8e1b1b;">\TeX</span><span style="color:#3c3c3c;">{} anymore.</span></div>
<div class="m" style="left:255.8px;top:276.31px;">    <span style="color:#3c3c3c;">The current version is </span><span style="color:#8e1b1b;">\LaTeXe</span><span style="color:#3c3c3c;">.</span></div>
<div class="m" style="left:255.8px;top:298.06px;">    <span style="color:#a8a8a8;">% This is a comment, not shown in final output.</span></div>
<div class="m" style="left:255.8px;top:308.93px;">    <span style="color:#a8a8a8;">% The following shows typesetting  power of LaTeX:</span></div>
<div class="m" style="left:255.8px;top:319.81px;">    <span style="color:#2a8fdd;">\begin{</span><span style="color:#1a1a7a;font-weight:bold;">align</span><span style="color:#2a8fdd;">}</span></div>
<div class="m" style="left:255.8px;top:330.68px;">        <span style="color:#2e8b3a;">E_0 </span><span style="color:#2f6fd0;font-weight:bold;">&amp;=</span><span style="color:#2e8b3a;"> mc^2 </span><span style="color:#c0392b;">\\</span></div>
<div class="m" style="left:255.8px;top:341.56px;">        <span style="color:#2e8b3a;">E </span><span style="color:#2f6fd0;font-weight:bold;">&amp;=</span><span style="color:#2e8b3a;"> </span><span style="color:#8a9a7a;">\frac</span><span style="color:#2e8b3a;">{mc^2}{</span><span style="color:#9a8f88;background:#f6b588;">\sq</span></div>
<div class="m" style="left:255.8px;top:352.43px;">    <span style="color:#2a8fdd;">\end{</span><span style="color:#1a1a7a;font-weight:bold;">align</span><span style="color:#2a8fdd;">}</span></div>
<div class="m" style="left:255.8px;top:363.31px;"><span style="color:#2a8fdd;">\end{</span><span style="color:#1a1a7a;font-weight:bold;">document</span><span style="color:#2a8fdd;">}</span></div>
<div class="r" style="left:417.90px;top:342.22px;width:0.90px;height:10.28px;background:#000;"></div>
<svg class="r" style="left:242.20px;top:138.50px;" width="5.60" height="3.40" viewBox="0 0 5.6 3.4"><path d="M0 0 H5.6 L2.8 3.4 Z" fill="#a9acae"/></svg>
<svg class="r" style="left:242.20px;top:323.37px;" width="5.60" height="3.40" viewBox="0 0 5.6 3.4"><path d="M0 0 H5.6 L2.8 3.4 Z" fill="#a9acae"/></svg>
<svg class="r" style="left:242.20px;top:345.12px;" width="5.60" height="3.40" viewBox="0 0 5.6 3.4"><path d="M0 0 H5.6 L2.8 3.4 Z" fill="#a9acae"/></svg>
<svg class="r" style="left:210.60px;top:95.80px;" width="9.40" height="8.40" viewBox="0 0 9.4 8.4"><path d="M9 4.2 L5.6 1 L2 1 L0.6 3 L0.6 5.6 L2 7.6 L5.6 7.6 Z" fill="#d7d9da"/></svg>
<div class="r" style="left:205.50px;top:113.00px;width:20.00px;height:0.80px;background:#c6c8ca;"></div>
<div class="r" style="left:209.30px;top:120.30px;width:10.60px;height:10.60px;background:#fcfcfc;border:0.6px solid #bfc1c3;"></div><div class="r" style="left:205px;top:116.2px;width:20px;height:20px;line-height:20px;text-align:center;font-family:Liberation Serif,serif;font-size:11.5px;color:#222;">B</div>
<div class="r" style="left:209.30px;top:140.90px;width:10.60px;height:10.60px;background:#fcfcfc;border:0.6px solid #bfc1c3;"></div><div class="r" style="left:205px;top:136.8px;width:20px;height:20px;line-height:20px;text-align:center;font-family:Liberation Serif,serif;font-size:11.5px;color:#222;font-style:italic;">I</div>
<div class="r" style="left:209.30px;top:161.50px;width:10.60px;height:10.60px;background:#fcfcfc;border:0.6px solid #bfc1c3;"></div><div class="r" style="left:205px;top:157px;width:20px;height:20px;line-height:20px;text-align:center;font-family:Liberation Serif,serif;font-size:11.5px;color:#222;font-family:DejaVu Sans,sans-serif;font-size:8.5px;text-decoration:underline;">U</div>
<div class="r" style="left:210.00px;top:183.40px;width:8.00px;height:0.90px;background:#555;"></div><div class="r" style="left:210.00px;top:185.70px;width:5.00px;height:0.90px;background:#555;"></div><div class="r" style="left:210.00px;top:188.00px;width:8.00px;height:0.90px;background:#555;"></div><div class="r" style="left:210.00px;top:190.30px;width:4.00px;height:0.90px;background:#555;"></div><div class="r" style="left:214.00px;top:192.60px;width:1.00px;height:0.90px;background:#555;"></div>
<div class="r" style="left:211.00px;top:203.60px;width:8.00px;height:0.90px;background:#555;"></div><div class="r" style="left:210.00px;top:205.90px;width:10.00px;height:0.90px;background:#555;"></div><div class="r" style="left:212.50px;top:208.20px;width:5.00px;height:0.90px;background:#555;"></div><div class="r" style="left:210.00px;top:210.50px;width:10.00px;height:0.90px;background:#555;"></div><div class="r" style="left:214.00px;top:212.80px;width:2.00px;height:0.90px;background:#555;"></div>
<div class="r" style="left:211.00px;top:223.00px;width:9.00px;height:0.90px;background:#555;"></div><div class="r" style="left:215.00px;top:225.30px;width:5.00px;height:0.90px;background:#555;"></div><div class="r" style="left:211.00px;top:227.60px;width:9.00px;height:0.90px;background:#555;"></div><div class="r" style="left:214.00px;top:229.90px;width:6.00px;height:0.90px;background:#555;"></div><div class="r" style="left:216.00px;top:232.20px;width:1.00px;height:0.90px;background:#555;"></div>
<div class="r" style="left:205.50px;top:240.50px;width:20.00px;height:0.80px;background:#c6c8ca;"></div>
<div class="r" style="left:211.50px;top:254.20px;width:7.00px;height:0.90px;background:#555;"></div>
<div class="r" style="left:214.40px;top:250.40px;width:1.40px;height:2.20px;background:#444;"></div>
<div class="r" style="left:205.50px;top:267.00px;width:20.00px;height:0.80px;background:#c6c8ca;"></div>
<div class="r" style="left:203px;top:269.6px;width:24px;height:20px;line-height:20px;text-align:center;font-family:Liberation Serif,serif;font-size:11px;color:#333;white-space:pre;font-family:DejaVu Sans,sans-serif;font-size:9.5px;">f<span style="font-size:6.5px;vertical-align:-2px;">×</span></div>
<div class="r" style="left:203px;top:289.4px;width:24px;height:20px;line-height:20px;text-align:center;font-family:Liberation Serif,serif;font-size:11px;color:#333;white-space:pre;left:200.5px;"><i>x</i></div>
<div class="r" style="left:216.20px;top:301.60px;width:3.60px;height:3.60px;background:transparent;border:0.7px solid #b0c684;"></div>
<div class="r" style="left:203px;top:311.4px;width:24px;height:20px;line-height:20px;text-align:center;font-family:Liberation Serif,serif;font-size:11px;color:#333;white-space:pre;left:200.5px;"><i>x</i></div>
<div class="r" style="left:216.20px;top:314.80px;width:3.60px;height:3.60px;background:transparent;border:0.7px solid #b0c684;"></div>
<div class="r" style="left:212.60px;top:341.20px;width:5.40px;height:0.80px;background:#777;"></div>
<div class="r" style="left:203px;top:328.3px;width:24px;height:20px;line-height:20px;text-align:center;font-family:Liberation Serif,serif;font-size:11px;color:#333;white-space:pre;font-size:7px;color:#888;font-family:DejaVu Sans,sans-serif;">x</div>
<div class="r" style="left:203px;top:335.2px;width:24px;height:20px;line-height:20px;text-align:center;font-family:Liberation Serif,serif;font-size:11px;color:#333;white-space:pre;font-size:7px;color:#888;font-family:DejaVu Sans,sans-serif;">x</div>
<div class="r" style="left:212.60px;top:360.90px;width:5.40px;height:0.80px;background:#777;"></div>
<div class="r" style="left:203px;top:348.0px;width:24px;height:20px;line-height:20px;text-align:center;font-family:Liberation Serif,serif;font-size:11px;color:#333;white-space:pre;font-size:7px;color:#888;font-family:DejaVu Sans,sans-serif;">x</div>
<div class="r" style="left:203px;top:354.9px;width:24px;height:20px;line-height:20px;text-align:center;font-family:Liberation Serif,serif;font-size:11px;color:#333;white-space:pre;font-size:7px;color:#888;font-family:DejaVu Sans,sans-serif;">x</div>
<div class="r" style="left:203px;top:371.2px;width:24px;height:20px;line-height:20px;text-align:center;font-family:Liberation Serif,serif;font-size:11px;color:#333;white-space:pre;font-family:DejaVu Sans,sans-serif;font-size:9.5px;color:#444;letter-spacing:-0.6px;">√<span style="font-size:8.5px;border-top:0.7px solid #555;">a</span></div>
<div class="r" style="left:467.60px;top:200.80px;width:119.20px;height:19.80px;background:rgba(120,123,126,0.28);"></div>
<div class="r" style="left:529.00px;top:201.50px;width:0.80px;height:19.00px;background:rgba(150,152,154,0.5);"></div>
<div class="r" style="left:411.30px;top:200.30px;width:56.30px;height:20.60px;background:#f3f4f4;border:0.7px solid #cfd1d3;border-bottom:none;box-sizing:border-box;"></div>
<div class="t" style="left:423.80px;top:204.14px;font-size:9.425px;color:#33383c;">typical</div>
<div class="t" style="left:475.00px;top:204.14px;font-size:9.425px;color:#474b4f;">most used</div>
<div class="t" style="left:552.50px;top:204.14px;font-size:9.425px;color:#474b4f;">all</div>
<div class="r" style="left:411.20px;top:220.60px;width:210.60px;height:114.80px;background:#fdfdfd;border:0.9px solid #9ed3ef;box-sizing:border-box;"></div>
<div class="r" style="left:412.20px;top:221.80px;width:208.60px;height:10.60px;background:#3daee9;"></div>
<div class="t" style="left:413.20px;top:221.44px;font-size:9.425px;color:#d6ecf8;">\sqcup</div>
<div class="t" style="left:413.2px;top:232.94px;font-size:9.425px;"><span style="color:#33383c">\sqrt{</span><span style="color:#b0b3b5">arg</span><span style="color:#33383c">}</span></div>
<div class="t" style="left:413.2px;top:243.84px;font-size:9.425px;"><span style="color:#33383c">\sqrt[</span><span style="color:#b0b3b5">root</span><span style="color:#33383c">]{</span><span style="color:#b0b3b5">arg</span><span style="color:#33383c">}</span></div>
<div class="t" style="left:413.2px;top:254.74px;font-size:9.425px;"><span style="color:#33383c">\sqsupseteq</span></div>
<div class="t" style="left:234.20px;top:455.54px;font-size:9.425px;color:#3b4045;">Line: 24</div>
<div class="t" style="left:283.80px;top:455.54px;font-size:9.425px;color:#3b4045;">Column: 28</div>
<div class="t" style="left:385.80px;top:455.54px;font-size:9.425px;color:#3b4045;">INSERT</div>
<!-- s_bottom -->
<div class="r" style="left:204.00px;top:467.00px;width:491.50px;height:1.00px;background:#72767a;"></div>
<div class="r" style="left:262.50px;top:470.60px;width:198.20px;height:19.20px;background:#c6c8c9;"></div>
<div class="r" style="left:321.30px;top:471.00px;width:0.80px;height:18.50px;background:#b4b6b8;"></div>
<div class="r" style="left:379.20px;top:471.00px;width:0.80px;height:18.50px;background:#b4b6b8;"></div>
<div class="r" style="left:205.60px;top:469.80px;width:57.00px;height:20.40px;background:#f1f2f3;border:0.7px solid #cfd1d3;border-bottom:none;box-sizing:border-box;border-radius:2px 2px 0 0;"></div>
<div class="t" style="left:211.30px;top:474.14px;font-size:9.425px;color:#3b4045;">Messages</div>
<div class="t" style="left:283.80px;top:474.14px;font-size:9.425px;color:#3b4045;">Log</div>
<div class="t" style="left:331.70px;top:474.14px;font-size:9.425px;color:#3b4045;">Preview</div>
<div class="t" style="left:385.30px;top:474.14px;font-size:9.425px;color:#3b4045;">Search Results</div>
<svg class="r" style="left:679.00px;top:475.60px;" width="8.60" height="8.60" viewBox="0 0 8.6 8.6"><path d="M0.8 0.8 L7.8 7.8 M7.8 0.8 L0.8 7.8" stroke="#232629" stroke-width="1.2"/></svg>
<div class="r" style="left:204.20px;top:490.00px;width:490.80px;height:168.20px;background:#ffffff;"></div>
<div class="r" style="left:204.20px;top:613.60px;width:490.80px;height:11.40px;background:#ebecec;"></div>
<div class="t" style="left:206.80px;top:494.23px;font-size:9.465px;color:#38a538;">Process started: pdflatex -synctex=1 -interaction=nonstopmode "texstudio_UT5378".tex</div>
<div class="t" style="left:206.80px;top:516.13px;font-size:9.465px;color:#474b50;">Process exited normally</div>
<div class="t" style="left:206.80px;top:559.23px;font-size:9.465px;color:#38a538;">Process started: pdflatex -synctex=1 -interaction=nonstopmode "texstudio_UT5378".tex</div>
<div class="t" style="left:206.80px;top:580.73px;font-size:9.465px;color:#474b50;">Process exited normally</div>
<!-- s_pdf -->
<div class="r" style="left:694.90px;top:67.90px;width:1.10px;height:589.70px;background:#606468;"></div>
<div class="r" style="left:701.50px;top:70.00px;width:1.00px;height:19.00px;background:#d3d5d7;"></div><div class="r" style="left:702.50px;top:70.00px;width:1.00px;height:19.00px;background:#f8f8f8;"></div>
<div class="r" style="left:705.70px;top:70.00px;width:1.00px;height:19.00px;background:#d3d5d7;"></div><div class="r" style="left:706.70px;top:70.00px;width:1.00px;height:19.00px;background:#f8f8f8;"></div>
<svg class="r" style="left:715.80px;top:74.80px;" width="9.40" height="10.00" viewBox="0 0 9.4 10"><rect width="9.4" height="10" fill="#181a2a"/><path d="M1 9 L8.4 1.2 V9 Z" fill="#b0202c"/><rect x="0.6" y="0.6" width="2.6" height="2.4" fill="#2a7fd0"/></svg>
<div class="r" style="left:733.70px;top:70.00px;width:1.00px;height:19.00px;background:#d3d5d7;"></div><div class="r" style="left:734.70px;top:70.00px;width:1.00px;height:19.00px;background:#f8f8f8;"></div>
<svg class="r" style="left:740.60px;top:74.60px;" width="11.60" height="11.00" viewBox="0 0 11.6 11"><circle cx="4.3" cy="4.3" r="3.3" fill="none" stroke="#232629" stroke-width="1.5"/><path d="M6.8 6.8 L10.8 10.4" stroke="#232629" stroke-width="1.7"/></svg>
<svg class="r" style="left:762.60px;top:74.40px;" width="10.00" height="11.00" viewBox="0 0 10 11"><path d="M2.6 10.4 V7.6 L0.8 5.4 L1.8 4.6 L3.2 6 V2 H4.4 V5 V1.2 H5.6 V5 V1.6 H6.8 V5.2 V2.6 H8 V7.8 L7.4 10.4 Z" fill="#f4f4f4" stroke="#8e9194" stroke-width="0.8"/></svg>
<div class="r" style="left:779.80px;top:70.00px;width:1.00px;height:19.00px;background:#d3d5d7;"></div><div class="r" style="left:780.80px;top:70.00px;width:1.00px;height:19.00px;background:#f8f8f8;"></div>
<svg class="r" style="left:788.20px;top:75.60px;" width="9.60" height="8.60" viewBox="0 0 9.6 8.6"><path d="M0.6 4.3 L3.6 0.8 L7.8 0.8 L9.2 2.8 L9.2 5.8 L7.8 7.8 L3.6 7.8 Z" fill="#f3c632"/><path d="M3.4 4.3 H6.6" stroke="#dca818" stroke-width="1.8"/></svg>
<svg class="r" style="left:808.60px;top:75.60px;" width="9.60" height="8.60" viewBox="0 0 9.6 8.6"><path d="M9 4.3 L6 0.8 L1.8 0.8 L0.4 2.8 L0.4 5.8 L1.8 7.8 L6 7.8 Z" fill="#f3c632"/><path d="M3 4.3 H6.2" stroke="#dca818" stroke-width="1.8"/></svg>
<div class="r" style="left:825.80px;top:70.00px;width:1.00px;height:19.00px;background:#d3d5d7;"></div><div class="r" style="left:826.80px;top:70.00px;width:1.00px;height:19.00px;background:#f8f8f8;"></div>
<svg class="r" style="left:834.80px;top:75.20px;" width="9.00" height="9.40" viewBox="0 0 9 9.4"><path d="M1 0.4 V9 M8 0.6 L3.4 4.7 L8 8.8" fill="none" stroke="#31363b" stroke-width="1"/></svg>
<svg class="r" style="left:856.40px;top:75.20px;" width="9.00" height="9.40" viewBox="0 0 9 9.4"><path d="M6.6 0.6 L1.8 4.7 L6.6 8.8" fill="none" stroke="#31363b" stroke-width="1"/></svg>
<div class="r" style="left:870.80px;top:69.80px;width:12.40px;height:18.40px;background:#fcfcfc;border:0.7px solid #cfd1d3;box-sizing:border-box;border-radius:1.5px;"></div>
<div class="t" style="left:873.40px;top:73.74px;font-size:9.425px;color:#3b4045;">1</div>
<div class="t" style="left:886.30px;top:73.74px;font-size:9.425px;color:#3b4045;">of 1</div>
<svg class="r" style="left:910.80px;top:75.20px;" width="9.00" height="9.40" viewBox="0 0 9 9.4"><path d="M2.4 0.6 L7.2 4.7 L2.4 8.8" fill="none" stroke="#31363b" stroke-width="1"/></svg>
<svg class="r" style="left:931.20px;top:75.20px;" width="9.00" height="9.40" viewBox="0 0 9 9.4"><path d="M1 0.6 L5.6 4.7 L1 8.8 M8 0.4 V9" fill="none" stroke="#31363b" stroke-width="1"/></svg>
<div class="r" style="left:947.80px;top:70.00px;width:1.00px;height:19.00px;background:#d3d5d7;"></div><div class="r" style="left:948.80px;top:70.00px;width:1.00px;height:19.00px;background:#f8f8f8;"></div>
<svg class="r" style="left:956.40px;top:75.00px;" width="10.00" height="10.00" viewBox="0 0 10 10"><rect x="2.2" y="2.2" width="5.6" height="5.6" fill="none" stroke="#31363b" stroke-width="1"/><path d="M0.5 2 V0.5 H2 M8 0.5 H9.5 V2 M9.5 8 V9.5 H8 M2 9.5 H0.5 V8" fill="none" stroke="#31363b" stroke-width="1"/></svg>
<svg class="r" style="left:976.80px;top:75.00px;" width="10.00" height="10.00" viewBox="0 0 10 10"><rect x="2.8" y="3.2" width="4.4" height="3.6" fill="none" stroke="#31363b" stroke-width="1"/><path d="M0.5 2.6 V0.5 H2.6 M7.4 0.5 H9.5 V2.6 M9.5 7.4 V9.5 H7.4 M2.6 9.5 H0.5 V7.4" fill="none" stroke="#31363b" stroke-width="1" stroke-dasharray="1.6 0.8"/></svg>
<svg class="r" style="left:997.00px;top:75.00px;" width="10.00" height="10.00" viewBox="0 0 10 10"><rect x="0.6" y="0.6" width="8.8" height="8.8" fill="none" stroke="#31363b" stroke-width="1.1" stroke-dasharray="2 1.4"/></svg>
<div class="r" style="left:1013.00px;top:70.30px;width:18.40px;height:18.40px;background:#c6c8c9;border-radius:1.5px;"></div>
<svg class="r" style="left:1017.40px;top:75.00px;" width="10.00" height="10.00" viewBox="0 0 10 10"><rect x="2.6" y="3" width="4.8" height="4" rx="1" fill="none" stroke="#31363b" stroke-width="1"/><path d="M0.5 2.6 V0.5 H2.6 M7.4 0.5 H9.5 V2.6 M9.5 7.4 V9.5 H7.4 M2.6 9.5 H0.5 V7.4" fill="none" stroke="#31363b" stroke-width="1" stroke-dasharray="1.6 0.8"/></svg>
<div class="r" style="left:1034.50px;top:70.00px;width:1.00px;height:19.00px;background:#d3d5d7;"></div><div class="r" style="left:1035.50px;top:70.00px;width:1.00px;height:19.00px;background:#f8f8f8;"></div>
<svg class="r" style="left:1334.40px;top:75.60px;" width="10.80" height="8.40" viewBox="0 0 10.8 8.4"><rect x="0.6" y="0.6" width="9.6" height="7.2" fill="none" stroke="#31363b" stroke-width="1"/><rect x="1.6" y="2.4" width="2.4" height="3.6" fill="#31363b"/></svg>
<svg class="r" style="left:1354.80px;top:74.80px;" width="10.80" height="9.40" viewBox="0 0 10.8 9.4"><path d="M1.6 2 V1 Q1.6 0.5 2.2 0.5 H9.4 Q10.2 0.5 10.2 1.4 V6.4" fill="none" stroke="#31363b" stroke-width="0.9"/><rect x="0.6" y="2.4" width="8.4" height="6.4" rx="0.8" fill="none" stroke="#31363b" stroke-width="1"/></svg>
<svg class="r" style="left:1376.00px;top:75.60px;" width="8.80" height="8.80" viewBox="0 0 8.8 8.8"><path d="M0.8 0.8 L8 8 M8 0.8 L0.8 8" stroke="#232629" stroke-width="1.3"/></svg>
<div class="r" style="left:696.20px;top:90.80px;width:695.80px;height:540.00px;background:#888c90;"></div>
<div class="r" style="left:846.80px;top:90.80px;width:381.40px;height:540.00px;background:#ffffff;"></div>
<div class="r" style="left:1383.40px;top:96.60px;width:3.40px;height:529.40px;background:#585c60;border-radius:1.7px;"></div>
<div class="pd" style="left:1029.60px;top:194.00px;font-size:10.6px;line-height:12.72px;color:#2a2a2a;">L<span style="font-size:7px;vertical-align:2.2px;margin-left:-2.6px;">A</span><span style="margin-left:-1.2px;">T</span><span style="vertical-align:-1.8px;margin-left:-1.6px;">E</span><span style="margin-left:-1.2px;">X</span></div>
<div class="pd" style="left:1014.40px;top:231.00px;font-size:7.7px;line-height:9.24px;letter-spacing:0.12px;">October 12, 2017</div>
<div class="pd" style="left:942.30px;top:255.28px;font-size:6.7px;line-height:8.04px;width:210.3px;text-align:justify;text-align-last:justify;white-space:normal;">L<span style="font-size:4.4px;vertical-align:1.3px;margin-left:-1.5px;">A</span><span style="margin-left:-0.7px;">T</span><span style="vertical-align:-1px;margin-left:-0.8px;">E</span><span style="margin-left:-0.6px;">X</span> is a document preparation system for the T<span style="vertical-align:-1px;margin-left:-0.8px;">E</span><span style="margin-left:-0.6px;">X</span> typesetting program.</div>
<div class="pd" style="left:932.10px;top:262.96px;font-size:6.7px;line-height:8.04px;width:220.5px;text-align:justify;text-align-last:justify;white-space:normal;">It offers programmable desktop publishing features and extensive facilities for</div>
<div class="pd" style="left:932.10px;top:270.64px;font-size:6.7px;line-height:8.04px;width:220.5px;text-align:justify;text-align-last:justify;white-space:normal;">automating most aspects of typesetting and desktop publishing, including num-</div>
<div class="pd" style="left:932.10px;top:278.32px;font-size:6.7px;line-height:8.04px;width:220.5px;text-align:justify;text-align-last:justify;white-space:normal;">bering and cross-referencing, tables and figures, page layout, bibliographies, and</div>
<div class="pd" style="left:932.10px;top:286.00px;font-size:6.7px;line-height:8.04px;width:220.5px;text-align:justify;text-align-last:justify;white-space:normal;">much more. L<span style="font-size:4.4px;vertical-align:1.3px;margin-left:-1.5px;">A</span><span style="margin-left:-0.7px;">T</span><span style="vertical-align:-1px;margin-left:-0.8px;">E</span><span style="margin-left:-0.6px;">X</span> was originally written in 1984 by Leslie Lamport and has</div>
<div class="pd" style="left:932.10px;top:293.68px;font-size:6.7px;line-height:8.04px;width:220.5px;text-align:justify;text-align-last:justify;white-space:normal;">become the dominant method for using T<span style="vertical-align:-1px;margin-left:-0.8px;">E</span><span style="margin-left:-0.6px;">X</span>; few people write in plain T<span style="vertical-align:-1px;margin-left:-0.8px;">E</span><span style="margin-left:-0.6px;">X</span></div>
<div class="pd" style="left:932.10px;top:301.36px;font-size:6.7px;line-height:8.04px;word-spacing:0.3px;letter-spacing:0.05px;">anymore. The current version is L<span style="font-size:4.4px;vertical-align:1.3px;margin-left:-1.5px;">A</span><span style="margin-left:-0.7px;">T</span><span style="vertical-align:-1px;margin-left:-0.8px;">E</span><span style="margin-left:-0.6px;">X</span> 2ε.</div>
<div class="pd" style="left:1022.00px;top:322.40px;font-size:7.2px;line-height:8.64px;letter-spacing:0.3px;"><i>E</i><span style="font-size:4.4px;vertical-align:-1px;">0</span> = <i>mc</i><span style="font-size:4.4px;vertical-align:2.2px;">2</span></div>
<div class="pd" style="left:1144.60px;top:322.80px;font-size:6.4px;line-height:7.68px;">(1)</div>
<div class="pd" style="left:1024.20px;top:337.00px;font-size:7.2px;line-height:8.64px;letter-spacing:0.3px;"><i>E</i> =</div>
<div class="pd" style="left:1045.40px;top:332.00px;font-size:7.2px;line-height:8.64px;letter-spacing:0.3px;"><i>mc</i><span style="font-size:4.4px;vertical-align:2.2px;">2</span></div>
<div class="r" style="left:1039.40px;top:341.60px;width:23.40px;height:0.60px;background:#333;"></div>
<svg class="r" style="left:1038.40px;top:342.60px;" width="25.00" height="12.00" viewBox="0 0 25 12"><path d="M0.5 6.5 L1.8 5.8 L4 11 L6.4 1 H24.4" fill="none" stroke="#333" stroke-width="0.6"/></svg>
<div class="pd" style="left:1046.40px;top:344.20px;font-size:5.6px;line-height:6.72px;">1 − <span style="font-size:4px;"><i>v</i>²/<i>c</i>²</span></div>
<div class="pd" style="left:1144.60px;top:337.40px;font-size:6.4px;line-height:7.68px;">(2)</div>
<div class="pd" style="left:1040.80px;top:535.60px;font-size:5.4px;line-height:6.48px;">1</div>
<div class="r" style="left:698.30px;top:634.50px;width:21.60px;height:21.30px;background:#f2f3f4;border:0.8px solid #c2c5c7;box-sizing:border-box;border-radius:2px;box-shadow:0 0.6px 0.8px rgba(0,0,0,0.12);"></div>
<div class="r" style="left:726.20px;top:634.50px;width:21.60px;height:21.30px;background:#f2f3f4;border:0.8px solid #c2c5c7;box-sizing:border-box;border-radius:2px;box-shadow:0 0.6px 0.8px rgba(0,0,0,0.12);"></div>
<svg class="r" style="left:702.80px;top:638.80px;" width="12.00" height="12.40" viewBox="0 0 12 12.4"><g transform=""><path d="M0.8 11 L2.2 5.6 C2.4 -0.4 8.8 -0.4 9 5.6 L10.4 11 H7.4 L6.9 6.4 C6.7 3.4 4.5 3.4 4.3 6.4 L3.8 11 Z" fill="#b9bbbd" stroke="#777a7d" stroke-width="0.9"/><path d="M2.2 8.6 H6 M2.8 6.6 H5" stroke="#8d9093" stroke-width="0.7"/><path d="M6.4 7 L11.6 8.6 L8.4 11.8 Z" fill="#55585b"/></g></svg>
<svg class="r" style="left:730.60px;top:638.80px;" width="12.00" height="12.40" viewBox="0 0 12 12.4"><g transform="translate(12,0) scale(-1,1)"><path d="M0.8 11 L2.2 5.6 C2.4 -0.4 8.8 -0.4 9 5.6 L10.4 11 H7.4 L6.9 6.4 C6.7 3.4 4.5 3.4 4.3 6.4 L3.8 11 Z" fill="#b9bbbd" stroke="#777a7d" stroke-width="0.9"/><path d="M2.2 8.6 H6 M2.8 6.6 H5" stroke="#8d9093" stroke-width="0.7"/><path d="M6.4 7 L11.6 8.6 L8.4 11.8 Z" fill="#55585b"/></g></svg>
<div class="t" style="left:1157.50px;top:640.04px;font-size:9.425px;color:#3b4045;">Page 1 of 1</div>
<div class="t" style="left:1227.20px;top:640.04px;font-size:9.425px;color:#3b4045;">66%</div>
<div class="r" style="left:1264.50px;top:634.50px;width:21.60px;height:21.30px;background:#f2f3f4;border:0.8px solid #c2c5c7;box-sizing:border-box;border-radius:2px;box-shadow:0 0.6px 0.8px rgba(0,0,0,0.12);"></div>
<svg class="r" style="left:1270.60px;top:640.40px;" width="9.60" height="9.60" viewBox="0 0 9.6 9.6"><rect x="0.6" y="0.6" width="8.4" height="8.4" fill="none" stroke="#31363b" stroke-width="1"/><path d="M4.6 2.6 V5 H7 M4.6 5 L7.4 2.2" fill="none" stroke="#31363b" stroke-width="0.9"/><rect x="0.6" y="6.2" width="2.6" height="2.8" fill="#f2f3f4" stroke="#31363b" stroke-width="0.8"/></svg>
<div class="r" style="left:1293.00px;top:643.20px;width:69.00px;height:4.00px;background:#c0c2c4;border-radius:2px;"></div>
<div class="r" style="left:1293.00px;top:643.20px;width:20.00px;height:4.00px;background:#3daee9;border-radius:2px;"></div>
<div class="r" style="left:1307.90px;top:638.80px;width:12.60px;height:12.60px;background:#f4f5f5;border-radius:50%;border:0.8px solid #c4c6c8;box-sizing:border-box;"></div>
<div class="r" style="left:1369.20px;top:634.50px;width:21.60px;height:21.30px;background:#f2f3f4;border:0.8px solid #c2c5c7;box-sizing:border-box;border-radius:2px;box-shadow:0 0.6px 0.8px rgba(0,0,0,0.12);"></div>
<svg class="r" style="left:1375.40px;top:640.40px;" width="9.60" height="9.60" viewBox="0 0 9.6 9.6"><rect x="0.6" y="0.6" width="8.4" height="8.4" fill="none" stroke="#31363b" stroke-width="1" stroke-dasharray="1.8 1.4"/><path d="M4.4 1.4 L8.2 5.2 M8.2 1.4 L4.4 5.2" stroke="#31363b" stroke-width="0.9"/><rect x="0.6" y="6.2" width="2.6" height="2.8" fill="#f2f3f4" stroke="#31363b" stroke-width="0.8"/></svg>
<!-- s_status -->
<div class="r" style="left:2.00px;top:663.00px;width:18.80px;height:17.80px;background:#c8cacb;border-radius:1.5px;"></div>
<svg class="r" style="left:6.30px;top:666.30px;" width="11.00" height="11.20" viewBox="0 0 11 11.2"><rect x="0" y="0" width="11" height="11.2" fill="#7b7f82"/><rect x="0.8" y="0.8" width="2.2" height="9.6" fill="#fcfcfc"/><rect x="3.6" y="7.6" width="6.6" height="2.8" fill="#8e9294"/></svg>
<div class="r" style="left:27.20px;top:663.00px;width:18.40px;height:17.80px;background:#c8cacb;border-radius:1.5px;"></div>
<svg class="r" style="left:30.20px;top:666.30px;" width="11.40" height="11.20" viewBox="0 0 11.4 11.2"><rect x="0" y="0" width="11.4" height="11.2" fill="#7b7f82"/><rect x="0.8" y="0.8" width="2.2" height="9.6" fill="#9a9d9f"/><rect x="3.8" y="7.6" width="6.8" height="2.8" fill="#fcfcfc"/></svg>
<div class="t" style="left:1091px;top:664.2px;font-size:9px;color:#3a3f44;letter-spacing:-0.7px;font-weight:normal;-webkit-text-stroke:0.3px #3a3f44;">LT</div>
<div class="r" style="left:1091.60px;top:675.60px;width:8.60px;height:0.80px;background:#a8abad;"></div>
<div class="t" style="left:1117.80px;top:665.64px;font-size:9.425px;color:#3b4045;">en_US</div>
<div class="t" style="left:1170.50px;top:665.64px;font-size:9.425px;color:#3b4045;">UTF-8</div>
<div class="t" style="left:1219.20px;top:665.64px;font-size:9.425px;color:#3b4045;">Ready</div>
<div class="t" style="left:1259.50px;top:665.64px;font-size:9.425px;color:#3b4045;">Automatic</div>
<svg class="r" style="left:1322.30px;top:666.60px;" width="9.60" height="10.60" viewBox="0 0 9.6 10.6"><path d="M0.3 0.3 H2 V1 H9.3 V10.3 L5.6 8 L2 10.3 V2 H0.3 Z" fill="#a0109a"/><text x="5.7" y="7" font-size="6.4" font-weight="bold" text-anchor="middle" font-family="DejaVu Sans,sans-serif" fill="#f4e0f4">1</text></svg>
<svg class="r" style="left:1349.00px;top:666.60px;" width="9.60" height="10.60" viewBox="0 0 9.6 10.6"><path d="M0.3 0.3 H2 V1 H9.3 V10.3 L5.6 8 L2 10.3 V2 H0.3 Z" fill="#a0109a"/><text x="5.7" y="7" font-size="6.4" font-weight="bold" text-anchor="middle" font-family="DejaVu Sans,sans-serif" fill="#f4e0f4">2</text></svg>
<svg class="r" style="left:1376.00px;top:666.60px;" width="9.60" height="10.60" viewBox="0 0 9.6 10.6"><path d="M0.3 0.3 H2 V1 H9.3 V10.3 L5.6 8 L2 10.3 V2 H0.3 Z" fill="#a0109a"/><text x="5.7" y="7" font-size="6.4" font-weight="bold" text-anchor="middle" font-family="DejaVu Sans,sans-serif" fill="#f4e0f4">3</text></svg>
</div>
</body></html>
